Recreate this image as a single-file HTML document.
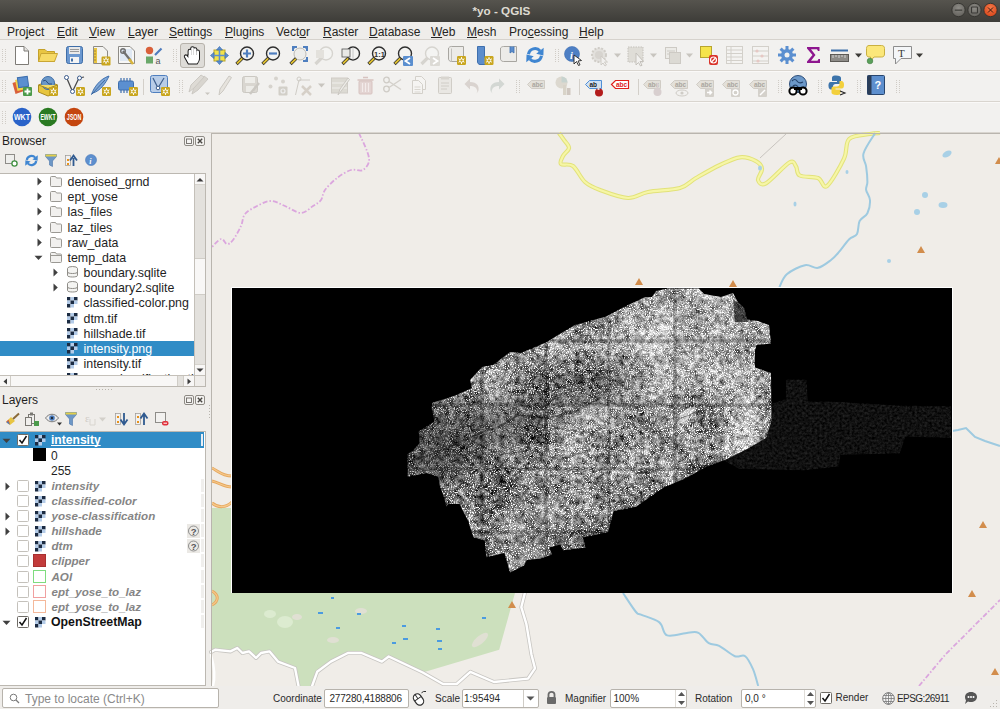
<!DOCTYPE html><html><head><meta charset="utf-8"><title>QGIS</title><style>
*{margin:0;padding:0;box-sizing:border-box}
html,body{width:1000px;height:709px;overflow:hidden;background:#f0efed;font-family:"Liberation Sans",sans-serif}
.a{position:absolute}
.t{position:absolute;white-space:nowrap;line-height:1}
svg{overflow:visible}
u{text-decoration-skip-ink:none;text-underline-offset:0.6px}
</style></head><body><div class="a" style="left:0;top:0;width:1000px;height:22px;background:linear-gradient(#56544e,#3d3c38)"></div><div class="t" style="left:472.5px;top:4.8px;font-size:11.7px;color:#dfdbd2;font-weight:bold;font-style:normal;">*yo - QGIS</div><svg style="position:absolute;left:950px;top:2px" width="50" height="18" viewBox="0 0 50 18" >
<defs><radialGradient id="wb" cx="50%" cy="35%" r="65%"><stop offset="0" stop-color="#8e8c87"/><stop offset="1" stop-color="#63615c"/></radialGradient>
<radialGradient id="wc" cx="50%" cy="35%" r="65%"><stop offset="0" stop-color="#f57a4a"/><stop offset="1" stop-color="#d9461a"/></radialGradient></defs>
<circle cx="8.5" cy="8" r="6.7" fill="url(#wb)" stroke="#363531" stroke-width="1"/>
<rect x="4.8" y="7.6" width="7.4" height="1.1" fill="#3a3936"/>
<circle cx="24.5" cy="8" r="6.7" fill="url(#wb)" stroke="#363531" stroke-width="1"/>
<rect x="21.5" y="5" width="6" height="6" rx="0.8" fill="none" stroke="#3a3936" stroke-width="1.1"/>
<circle cx="40.5" cy="8" r="6.7" fill="url(#wc)" stroke="#363531" stroke-width="1"/>
<path d="M38 5.5 L43 10.5 M43 5.5 L38 10.5" stroke="#3b1a10" stroke-width="1.0"/>
</svg><div class="a" style="left:0;top:22px;width:1000px;height:17px;background:#efedea"></div><div class="a" style="left:0;top:39px;width:1000px;height:1px;background:#d6d2cc"></div><div class="t" style="left:7px;top:26px;font-size:12px;color:#262523;font-weight:normal;font-style:normal;">Pro<u>j</u>ect</div><div class="t" style="left:57px;top:26px;font-size:12px;color:#262523;font-weight:normal;font-style:normal;"><u>E</u>dit</div><div class="t" style="left:89px;top:26px;font-size:12px;color:#262523;font-weight:normal;font-style:normal;"><u>V</u>iew</div><div class="t" style="left:128px;top:26px;font-size:12px;color:#262523;font-weight:normal;font-style:normal;"><u>L</u>ayer</div><div class="t" style="left:169px;top:26px;font-size:12px;color:#262523;font-weight:normal;font-style:normal;"><u>S</u>ettings</div><div class="t" style="left:225px;top:26px;font-size:12px;color:#262523;font-weight:normal;font-style:normal;"><u>P</u>lugins</div><div class="t" style="left:276px;top:26px;font-size:12px;color:#262523;font-weight:normal;font-style:normal;">Vect<u>o</u>r</div><div class="t" style="left:323px;top:26px;font-size:12px;color:#262523;font-weight:normal;font-style:normal;"><u>R</u>aster</div><div class="t" style="left:369px;top:26px;font-size:12px;color:#262523;font-weight:normal;font-style:normal;"><u>D</u>atabase</div><div class="t" style="left:431px;top:26px;font-size:12px;color:#262523;font-weight:normal;font-style:normal;"><u>W</u>eb</div><div class="t" style="left:467px;top:26px;font-size:12px;color:#262523;font-weight:normal;font-style:normal;"><u>M</u>esh</div><div class="t" style="left:509px;top:26px;font-size:12px;color:#262523;font-weight:normal;font-style:normal;">Pro<u>c</u>essing</div><div class="t" style="left:579px;top:26px;font-size:12px;color:#262523;font-weight:normal;font-style:normal;"><u>H</u>elp</div><div class="a" style="left:0;top:40px;width:1000px;height:93px;background:#f2f1ef"></div><div class="a" style="left:0;top:70px;width:1000px;height:1px;background:#d9d5cf"></div><div class="a" style="left:0;top:71px;width:1000px;height:1px;background:#faf9f8"></div><div class="a" style="left:0;top:101px;width:1000px;height:1px;background:#d9d5cf"></div><div class="a" style="left:0;top:102px;width:1000px;height:1px;background:#faf9f8"></div><div class="a" style="left:0;top:132px;width:1000px;height:1px;background:#d9d5cf"></div><div class="a" style="left:0;top:133px;width:1000px;height:1px;background:#faf9f8"></div><div style="position:absolute;left:2px;top:49px;width:1px;height:1px;background:#d0ccc6"></div><div style="position:absolute;left:5px;top:49px;width:1px;height:1px;background:#d0ccc6"></div><div style="position:absolute;left:2px;top:51px;width:1px;height:1px;background:#d0ccc6"></div><div style="position:absolute;left:5px;top:51px;width:1px;height:1px;background:#d0ccc6"></div><div style="position:absolute;left:2px;top:53px;width:1px;height:1px;background:#d0ccc6"></div><div style="position:absolute;left:5px;top:53px;width:1px;height:1px;background:#d0ccc6"></div><div style="position:absolute;left:2px;top:55px;width:1px;height:1px;background:#d0ccc6"></div><div style="position:absolute;left:5px;top:55px;width:1px;height:1px;background:#d0ccc6"></div><div style="position:absolute;left:2px;top:57px;width:1px;height:1px;background:#d0ccc6"></div><div style="position:absolute;left:5px;top:57px;width:1px;height:1px;background:#d0ccc6"></div><div style="position:absolute;left:2px;top:59px;width:1px;height:1px;background:#d0ccc6"></div><div style="position:absolute;left:5px;top:59px;width:1px;height:1px;background:#d0ccc6"></div><div style="position:absolute;left:2px;top:61px;width:1px;height:1px;background:#d0ccc6"></div><div style="position:absolute;left:5px;top:61px;width:1px;height:1px;background:#d0ccc6"></div><div style="position:absolute;left:173px;top:49px;width:1px;height:1px;background:#d0ccc6"></div><div style="position:absolute;left:176px;top:49px;width:1px;height:1px;background:#d0ccc6"></div><div style="position:absolute;left:173px;top:51px;width:1px;height:1px;background:#d0ccc6"></div><div style="position:absolute;left:176px;top:51px;width:1px;height:1px;background:#d0ccc6"></div><div style="position:absolute;left:173px;top:53px;width:1px;height:1px;background:#d0ccc6"></div><div style="position:absolute;left:176px;top:53px;width:1px;height:1px;background:#d0ccc6"></div><div style="position:absolute;left:173px;top:55px;width:1px;height:1px;background:#d0ccc6"></div><div style="position:absolute;left:176px;top:55px;width:1px;height:1px;background:#d0ccc6"></div><div style="position:absolute;left:173px;top:57px;width:1px;height:1px;background:#d0ccc6"></div><div style="position:absolute;left:176px;top:57px;width:1px;height:1px;background:#d0ccc6"></div><div style="position:absolute;left:173px;top:59px;width:1px;height:1px;background:#d0ccc6"></div><div style="position:absolute;left:176px;top:59px;width:1px;height:1px;background:#d0ccc6"></div><div style="position:absolute;left:173px;top:61px;width:1px;height:1px;background:#d0ccc6"></div><div style="position:absolute;left:176px;top:61px;width:1px;height:1px;background:#d0ccc6"></div><div style="position:absolute;left:555px;top:49px;width:1px;height:1px;background:#d0ccc6"></div><div style="position:absolute;left:558px;top:49px;width:1px;height:1px;background:#d0ccc6"></div><div style="position:absolute;left:555px;top:51px;width:1px;height:1px;background:#d0ccc6"></div><div style="position:absolute;left:558px;top:51px;width:1px;height:1px;background:#d0ccc6"></div><div style="position:absolute;left:555px;top:53px;width:1px;height:1px;background:#d0ccc6"></div><div style="position:absolute;left:558px;top:53px;width:1px;height:1px;background:#d0ccc6"></div><div style="position:absolute;left:555px;top:55px;width:1px;height:1px;background:#d0ccc6"></div><div style="position:absolute;left:558px;top:55px;width:1px;height:1px;background:#d0ccc6"></div><div style="position:absolute;left:555px;top:57px;width:1px;height:1px;background:#d0ccc6"></div><div style="position:absolute;left:558px;top:57px;width:1px;height:1px;background:#d0ccc6"></div><div style="position:absolute;left:555px;top:59px;width:1px;height:1px;background:#d0ccc6"></div><div style="position:absolute;left:558px;top:59px;width:1px;height:1px;background:#d0ccc6"></div><div style="position:absolute;left:555px;top:61px;width:1px;height:1px;background:#d0ccc6"></div><div style="position:absolute;left:558px;top:61px;width:1px;height:1px;background:#d0ccc6"></div><div style="position:absolute;left:2px;top:80px;width:1px;height:1px;background:#d0ccc6"></div><div style="position:absolute;left:5px;top:80px;width:1px;height:1px;background:#d0ccc6"></div><div style="position:absolute;left:2px;top:82px;width:1px;height:1px;background:#d0ccc6"></div><div style="position:absolute;left:5px;top:82px;width:1px;height:1px;background:#d0ccc6"></div><div style="position:absolute;left:2px;top:84px;width:1px;height:1px;background:#d0ccc6"></div><div style="position:absolute;left:5px;top:84px;width:1px;height:1px;background:#d0ccc6"></div><div style="position:absolute;left:2px;top:86px;width:1px;height:1px;background:#d0ccc6"></div><div style="position:absolute;left:5px;top:86px;width:1px;height:1px;background:#d0ccc6"></div><div style="position:absolute;left:2px;top:88px;width:1px;height:1px;background:#d0ccc6"></div><div style="position:absolute;left:5px;top:88px;width:1px;height:1px;background:#d0ccc6"></div><div style="position:absolute;left:2px;top:90px;width:1px;height:1px;background:#d0ccc6"></div><div style="position:absolute;left:5px;top:90px;width:1px;height:1px;background:#d0ccc6"></div><div style="position:absolute;left:2px;top:92px;width:1px;height:1px;background:#d0ccc6"></div><div style="position:absolute;left:5px;top:92px;width:1px;height:1px;background:#d0ccc6"></div><div style="position:absolute;left:179px;top:80px;width:1px;height:1px;background:#d0ccc6"></div><div style="position:absolute;left:182px;top:80px;width:1px;height:1px;background:#d0ccc6"></div><div style="position:absolute;left:179px;top:82px;width:1px;height:1px;background:#d0ccc6"></div><div style="position:absolute;left:182px;top:82px;width:1px;height:1px;background:#d0ccc6"></div><div style="position:absolute;left:179px;top:84px;width:1px;height:1px;background:#d0ccc6"></div><div style="position:absolute;left:182px;top:84px;width:1px;height:1px;background:#d0ccc6"></div><div style="position:absolute;left:179px;top:86px;width:1px;height:1px;background:#d0ccc6"></div><div style="position:absolute;left:182px;top:86px;width:1px;height:1px;background:#d0ccc6"></div><div style="position:absolute;left:179px;top:88px;width:1px;height:1px;background:#d0ccc6"></div><div style="position:absolute;left:182px;top:88px;width:1px;height:1px;background:#d0ccc6"></div><div style="position:absolute;left:179px;top:90px;width:1px;height:1px;background:#d0ccc6"></div><div style="position:absolute;left:182px;top:90px;width:1px;height:1px;background:#d0ccc6"></div><div style="position:absolute;left:179px;top:92px;width:1px;height:1px;background:#d0ccc6"></div><div style="position:absolute;left:182px;top:92px;width:1px;height:1px;background:#d0ccc6"></div><div style="position:absolute;left:516px;top:80px;width:1px;height:1px;background:#d0ccc6"></div><div style="position:absolute;left:519px;top:80px;width:1px;height:1px;background:#d0ccc6"></div><div style="position:absolute;left:516px;top:82px;width:1px;height:1px;background:#d0ccc6"></div><div style="position:absolute;left:519px;top:82px;width:1px;height:1px;background:#d0ccc6"></div><div style="position:absolute;left:516px;top:84px;width:1px;height:1px;background:#d0ccc6"></div><div style="position:absolute;left:519px;top:84px;width:1px;height:1px;background:#d0ccc6"></div><div style="position:absolute;left:516px;top:86px;width:1px;height:1px;background:#d0ccc6"></div><div style="position:absolute;left:519px;top:86px;width:1px;height:1px;background:#d0ccc6"></div><div style="position:absolute;left:516px;top:88px;width:1px;height:1px;background:#d0ccc6"></div><div style="position:absolute;left:519px;top:88px;width:1px;height:1px;background:#d0ccc6"></div><div style="position:absolute;left:516px;top:90px;width:1px;height:1px;background:#d0ccc6"></div><div style="position:absolute;left:519px;top:90px;width:1px;height:1px;background:#d0ccc6"></div><div style="position:absolute;left:516px;top:92px;width:1px;height:1px;background:#d0ccc6"></div><div style="position:absolute;left:519px;top:92px;width:1px;height:1px;background:#d0ccc6"></div><div style="position:absolute;left:778px;top:80px;width:1px;height:1px;background:#d0ccc6"></div><div style="position:absolute;left:781px;top:80px;width:1px;height:1px;background:#d0ccc6"></div><div style="position:absolute;left:778px;top:82px;width:1px;height:1px;background:#d0ccc6"></div><div style="position:absolute;left:781px;top:82px;width:1px;height:1px;background:#d0ccc6"></div><div style="position:absolute;left:778px;top:84px;width:1px;height:1px;background:#d0ccc6"></div><div style="position:absolute;left:781px;top:84px;width:1px;height:1px;background:#d0ccc6"></div><div style="position:absolute;left:778px;top:86px;width:1px;height:1px;background:#d0ccc6"></div><div style="position:absolute;left:781px;top:86px;width:1px;height:1px;background:#d0ccc6"></div><div style="position:absolute;left:778px;top:88px;width:1px;height:1px;background:#d0ccc6"></div><div style="position:absolute;left:781px;top:88px;width:1px;height:1px;background:#d0ccc6"></div><div style="position:absolute;left:778px;top:90px;width:1px;height:1px;background:#d0ccc6"></div><div style="position:absolute;left:781px;top:90px;width:1px;height:1px;background:#d0ccc6"></div><div style="position:absolute;left:778px;top:92px;width:1px;height:1px;background:#d0ccc6"></div><div style="position:absolute;left:781px;top:92px;width:1px;height:1px;background:#d0ccc6"></div><div style="position:absolute;left:818px;top:80px;width:1px;height:1px;background:#d0ccc6"></div><div style="position:absolute;left:821px;top:80px;width:1px;height:1px;background:#d0ccc6"></div><div style="position:absolute;left:818px;top:82px;width:1px;height:1px;background:#d0ccc6"></div><div style="position:absolute;left:821px;top:82px;width:1px;height:1px;background:#d0ccc6"></div><div style="position:absolute;left:818px;top:84px;width:1px;height:1px;background:#d0ccc6"></div><div style="position:absolute;left:821px;top:84px;width:1px;height:1px;background:#d0ccc6"></div><div style="position:absolute;left:818px;top:86px;width:1px;height:1px;background:#d0ccc6"></div><div style="position:absolute;left:821px;top:86px;width:1px;height:1px;background:#d0ccc6"></div><div style="position:absolute;left:818px;top:88px;width:1px;height:1px;background:#d0ccc6"></div><div style="position:absolute;left:821px;top:88px;width:1px;height:1px;background:#d0ccc6"></div><div style="position:absolute;left:818px;top:90px;width:1px;height:1px;background:#d0ccc6"></div><div style="position:absolute;left:821px;top:90px;width:1px;height:1px;background:#d0ccc6"></div><div style="position:absolute;left:818px;top:92px;width:1px;height:1px;background:#d0ccc6"></div><div style="position:absolute;left:821px;top:92px;width:1px;height:1px;background:#d0ccc6"></div><div style="position:absolute;left:857px;top:80px;width:1px;height:1px;background:#d0ccc6"></div><div style="position:absolute;left:860px;top:80px;width:1px;height:1px;background:#d0ccc6"></div><div style="position:absolute;left:857px;top:82px;width:1px;height:1px;background:#d0ccc6"></div><div style="position:absolute;left:860px;top:82px;width:1px;height:1px;background:#d0ccc6"></div><div style="position:absolute;left:857px;top:84px;width:1px;height:1px;background:#d0ccc6"></div><div style="position:absolute;left:860px;top:84px;width:1px;height:1px;background:#d0ccc6"></div><div style="position:absolute;left:857px;top:86px;width:1px;height:1px;background:#d0ccc6"></div><div style="position:absolute;left:860px;top:86px;width:1px;height:1px;background:#d0ccc6"></div><div style="position:absolute;left:857px;top:88px;width:1px;height:1px;background:#d0ccc6"></div><div style="position:absolute;left:860px;top:88px;width:1px;height:1px;background:#d0ccc6"></div><div style="position:absolute;left:857px;top:90px;width:1px;height:1px;background:#d0ccc6"></div><div style="position:absolute;left:860px;top:90px;width:1px;height:1px;background:#d0ccc6"></div><div style="position:absolute;left:857px;top:92px;width:1px;height:1px;background:#d0ccc6"></div><div style="position:absolute;left:860px;top:92px;width:1px;height:1px;background:#d0ccc6"></div><div style="position:absolute;left:896px;top:80px;width:1px;height:1px;background:#d0ccc6"></div><div style="position:absolute;left:899px;top:80px;width:1px;height:1px;background:#d0ccc6"></div><div style="position:absolute;left:896px;top:82px;width:1px;height:1px;background:#d0ccc6"></div><div style="position:absolute;left:899px;top:82px;width:1px;height:1px;background:#d0ccc6"></div><div style="position:absolute;left:896px;top:84px;width:1px;height:1px;background:#d0ccc6"></div><div style="position:absolute;left:899px;top:84px;width:1px;height:1px;background:#d0ccc6"></div><div style="position:absolute;left:896px;top:86px;width:1px;height:1px;background:#d0ccc6"></div><div style="position:absolute;left:899px;top:86px;width:1px;height:1px;background:#d0ccc6"></div><div style="position:absolute;left:896px;top:88px;width:1px;height:1px;background:#d0ccc6"></div><div style="position:absolute;left:899px;top:88px;width:1px;height:1px;background:#d0ccc6"></div><div style="position:absolute;left:896px;top:90px;width:1px;height:1px;background:#d0ccc6"></div><div style="position:absolute;left:899px;top:90px;width:1px;height:1px;background:#d0ccc6"></div><div style="position:absolute;left:896px;top:92px;width:1px;height:1px;background:#d0ccc6"></div><div style="position:absolute;left:899px;top:92px;width:1px;height:1px;background:#d0ccc6"></div><div style="position:absolute;left:2px;top:111px;width:1px;height:1px;background:#d0ccc6"></div><div style="position:absolute;left:5px;top:111px;width:1px;height:1px;background:#d0ccc6"></div><div style="position:absolute;left:2px;top:113px;width:1px;height:1px;background:#d0ccc6"></div><div style="position:absolute;left:5px;top:113px;width:1px;height:1px;background:#d0ccc6"></div><div style="position:absolute;left:2px;top:115px;width:1px;height:1px;background:#d0ccc6"></div><div style="position:absolute;left:5px;top:115px;width:1px;height:1px;background:#d0ccc6"></div><div style="position:absolute;left:2px;top:117px;width:1px;height:1px;background:#d0ccc6"></div><div style="position:absolute;left:5px;top:117px;width:1px;height:1px;background:#d0ccc6"></div><div style="position:absolute;left:2px;top:119px;width:1px;height:1px;background:#d0ccc6"></div><div style="position:absolute;left:5px;top:119px;width:1px;height:1px;background:#d0ccc6"></div><div style="position:absolute;left:2px;top:121px;width:1px;height:1px;background:#d0ccc6"></div><div style="position:absolute;left:5px;top:121px;width:1px;height:1px;background:#d0ccc6"></div><div style="position:absolute;left:2px;top:123px;width:1px;height:1px;background:#d0ccc6"></div><div style="position:absolute;left:5px;top:123px;width:1px;height:1px;background:#d0ccc6"></div><svg style="position:absolute;left:14px;top:46px" width="16" height="19" viewBox="0 0 16 19" ><path d="M1.5 0.5 H10 L14.5 5 V18.5 H1.5 Z" fill="#fff" stroke="#7d7b76"/><path d="M10 0.5 V5 H14.5" fill="#e6e4e0" stroke="#7d7b76"/></svg><svg style="position:absolute;left:38px;top:47px" width="20" height="16" viewBox="0 0 20 16" ><path d="M0.5 2.5 H7 L9 4.5 H16.5 V14.5 H0.5 Z" fill="#e8c542" stroke="#c4a12a"/><path d="M0.5 14.5 L3 6.5 H19.5 L16.5 14.5 Z" fill="#f6da66" stroke="#c9a633"/></svg><svg style="position:absolute;left:66px;top:46px" width="17" height="18" viewBox="0 0 17 18" ><rect x="0.5" y="0.5" width="16" height="17" rx="2" fill="#6b98d0" stroke="#3f6ea8"/><rect x="3" y="1" width="11" height="7" fill="#e9e9e9"/><path d="M4 3.5H13M4 5.5H13" stroke="#9a9a9a"/><rect x="4" y="11" width="9" height="6" fill="#f4f4f4"/><rect x="5" y="12.5" width="2" height="3" fill="#3f6ea8"/></svg><svg style="position:absolute;left:92px;top:46px" width="19" height="19" viewBox="0 0 19 19" ><path d="M1.5 0.5 H11 L15.5 5 V17.5 H1.5 Z" fill="#f3f3f1" stroke="#8d8b86"/><rect x="2" y="2" width="3" height="15" fill="#e8c542"/><path d="M2 5H4M2 8H4M2 11H4M2 14H4" stroke="#a8862a"/><rect x="9.5" y="10.5" width="9" height="9" rx="1.2" fill="#c9a61f"/><path d="M14.0 14.5 L16.9 16.2 M14.0 14.5 L14.0 17.9 M14.0 14.5 L11.1 16.2 M14.0 14.5 L11.1 12.8 M14.0 14.5 L14.0 11.1 M14.0 14.5 L16.9 12.8 " stroke="#fff" stroke-width="1"/><circle cx="14.0" cy="14.5" r="1.7" fill="#c9a61f" stroke="#fff" stroke-width="0.9"/></svg><svg style="position:absolute;left:117px;top:46px" width="20" height="19" viewBox="0 0 20 19" ><path d="M1.5 0.5 H13 L17.5 5 V17.5 H1.5 Z" fill="#f7f7f6" stroke="#8d8b86"/><rect x="3" y="3" width="12" height="12" fill="#dfe8f3"/><path d="M6 5 L14 15" stroke="#6f6f6f" stroke-width="2.2"/><circle cx="6" cy="5" r="2.3" fill="none" stroke="#6f6f6f" stroke-width="1.4"/><path d="M12 13 L16 18" stroke="#d7b33a" stroke-width="2.6"/></svg><svg style="position:absolute;left:145px;top:46px" width="18" height="19" viewBox="0 0 18 19" ><circle cx="4.5" cy="4.5" r="3.7" fill="#d9603a"/><path d="M10 9 L16.5 2.5" stroke="#4e7bbd" stroke-width="2.2"/><rect x="1" y="10.5" width="7" height="7" fill="#6aa86a"/><text x="10.5" y="17.5" font-size="9" font-family="Liberation Sans" fill="#555">a</text></svg><div class="a" style="left:180px;top:43px;width:25px;height:25px;background:#dedcd8;border:1px solid #b6b2ab;border-radius:3px"></div><svg style="position:absolute;left:184px;top:46px" width="18" height="19" viewBox="0 0 18 19" ><g stroke="#1a1a1a" stroke-width="2" fill="#1a1a1a"><g ><rect x="4.6" y="3.8" width="2.6" height="10" rx="1.3"/><rect x="7.2" y="1.2" width="2.6" height="10" rx="1.3"/><rect x="9.8" y="2.2" width="2.6" height="10" rx="1.3"/><rect x="12.4" y="4.6" width="2.6" height="9" rx="1.3"/><path d="M4.6 10 L4.6 12.2 L2.6 9.8 C1.6 8.8 0.4 9.8 1 11 L4.6 17.6 H12.8 C14.2 16 15 14.6 15 12 V9 H4.6Z"/></g></g><g fill="#fff"><g ><rect x="4.6" y="3.8" width="2.6" height="10" rx="1.3"/><rect x="7.2" y="1.2" width="2.6" height="10" rx="1.3"/><rect x="9.8" y="2.2" width="2.6" height="10" rx="1.3"/><rect x="12.4" y="4.6" width="2.6" height="9" rx="1.3"/><path d="M4.6 10 L4.6 12.2 L2.6 9.8 C1.6 8.8 0.4 9.8 1 11 L4.6 17.6 H12.8 C14.2 16 15 14.6 15 12 V9 H4.6Z"/></g></g></svg><svg style="position:absolute;left:210px;top:46px" width="19" height="19" viewBox="0 0 19 19" ><rect x="4" y="4" width="11" height="11" fill="#f2e24a" stroke="#b8a52e"/><path d="M9.5 0.5 L12.5 4 H6.5 Z M9.5 18.5 L12.5 15 H6.5 Z M0.5 9.5 L4 6.5 V12.5 Z M18.5 9.5 L15 6.5 V12.5 Z" fill="#5c8fd0" stroke="#3e6fae" stroke-width="0.7"/><path d="M9.5 4V15M4 9.5H15" stroke="#5c8fd0" stroke-width="1.6"/></svg><svg style="position:absolute;left:235px;top:46px" width="20" height="20" viewBox="0 0 20 20" ><circle cx="12" cy="7.5" r="6.5" fill="#f4f4f2" stroke="#2f2f2f" stroke-width="1.4"/><path d="M7.5 12 L1.5 18" stroke="#2f2f2f" stroke-width="3.2"/><path d="M7.2 12.3 L2 17.5" stroke="#e0c030" stroke-width="1.8"/><path d="M12 3.5V11.5M8 7.5H16" stroke="#4f7fbf" stroke-width="2.2"/></svg><svg style="position:absolute;left:261px;top:46px" width="20" height="20" viewBox="0 0 20 20" ><circle cx="12" cy="7.5" r="6.5" fill="#f4f4f2" stroke="#2f2f2f" stroke-width="1.4"/><path d="M7.5 12 L1.5 18" stroke="#2f2f2f" stroke-width="3.2"/><path d="M7.2 12.3 L2 17.5" stroke="#e0c030" stroke-width="1.8"/><path d="M8 7.5H16" stroke="#4f7fbf" stroke-width="2.2"/></svg><svg style="position:absolute;left:289px;top:45px" width="20" height="20" viewBox="0 0 20 20" ><circle cx="11" cy="9" r="6" fill="#ededeb" stroke="#bdbbb6" stroke-width="1"/><path d="M7 13.5 L1.5 19" stroke="#2f2f2f" stroke-width="3.2"/><path d="M6.8 13.8 L2 18.5" stroke="#e0c030" stroke-width="1.8"/><path d="M3 1H8L3 6Z M19 1H14L19 6Z M19 17H14L19 12Z" fill="#4f7fbf"/><path d="M3 1H8V3H5V6H3Z M19 1V6H17V3H14V1Z M19 17V12H17V15H14V17Z" fill="#4f7fbf"/></svg><svg style="position:absolute;left:314px;top:46px" width="20" height="20" viewBox="0 0 20 20" ><circle cx="12" cy="7.5" r="6.5" fill="#f4f4f2" stroke="#d6d4cf" stroke-width="1.4"/><path d="M7.5 12 L1.5 18" stroke="#d6d4cf" stroke-width="3.2"/><path d="M7.2 12.3 L2 17.5" stroke="#d6d4cf" stroke-width="1.8"/><rect x="2" y="4" width="8" height="8" fill="#e3e1dc"/></svg><svg style="position:absolute;left:341px;top:46px" width="20" height="20" viewBox="0 0 20 20" ><circle cx="12" cy="7.5" r="6.5" fill="#f4f4f2" stroke="#2f2f2f" stroke-width="1.4"/><path d="M7.5 12 L1.5 18" stroke="#2f2f2f" stroke-width="3.2"/><path d="M7.2 12.3 L2 17.5" stroke="#e0c030" stroke-width="1.8"/><rect x="1" y="3" width="8" height="8" fill="#e9e9e7" stroke="#555" stroke-width="0.8"/><path d="M12 1.5V13.5" stroke="#c8c8c8"/></svg><svg style="position:absolute;left:367px;top:46px" width="20" height="20" viewBox="0 0 20 20" ><circle cx="12" cy="7.5" r="6.5" fill="#f4f4f2" stroke="#2f2f2f" stroke-width="1.4"/><path d="M7.5 12 L1.5 18" stroke="#2f2f2f" stroke-width="3.2"/><path d="M7.2 12.3 L2 17.5" stroke="#e0c030" stroke-width="1.8"/><text x="7" y="10.5" font-size="7.5" font-weight="bold" font-family="Liberation Sans" fill="#333">1:1</text></svg><svg style="position:absolute;left:393px;top:46px" width="20" height="20" viewBox="0 0 20 20" ><circle cx="12" cy="7.5" r="6.5" fill="#f4f4f2" stroke="#2f2f2f" stroke-width="1.4"/><path d="M7.5 12 L1.5 18" stroke="#2f2f2f" stroke-width="3.2"/><path d="M7.2 12.3 L2 17.5" stroke="#e0c030" stroke-width="1.8"/><rect x="10" y="10" width="10" height="10" rx="1" fill="#5b8fcf"/><path d="M17 12 L12.5 15 L17 18" fill="none" stroke="#fff" stroke-width="1.8"/></svg><svg style="position:absolute;left:420px;top:46px" width="20" height="20" viewBox="0 0 20 20" ><circle cx="12" cy="7.5" r="6.5" fill="#f4f4f2" stroke="#d6d4cf" stroke-width="1.4"/><path d="M7.5 12 L1.5 18" stroke="#d6d4cf" stroke-width="3.2"/><path d="M7.2 12.3 L2 17.5" stroke="#d6d4cf" stroke-width="1.8"/><rect x="10" y="10" width="10" height="10" rx="1" fill="#dcdad5"/><path d="M13 12 L17.5 15 L13 18" fill="none" stroke="#fff" stroke-width="1.8"/></svg><svg style="position:absolute;left:448px;top:46px" width="18" height="19" viewBox="0 0 18 19" ><path d="M0.5 2 C2 0 4 0.5 4 0.5 H15.5 V15.5 H3.5 C1.5 15.5 0.5 14 0.5 13 Z" fill="#ecebe8" stroke="#a8a6a1"/><path d="M3.5 2.5V15" stroke="#c3c1bc"/><rect x="9" y="10" width="9" height="9" rx="1.2" fill="#c9a61f"/><path d="M13.5 14.5 L16.4 16.2 M13.5 14.5 L13.5 17.9 M13.5 14.5 L10.6 16.2 M13.5 14.5 L10.6 12.8 M13.5 14.5 L13.5 11.1 M13.5 14.5 L16.4 12.8 " stroke="#fff" stroke-width="1"/><circle cx="13.5" cy="14.5" r="1.7" fill="#c9a61f" stroke="#fff" stroke-width="0.9"/></svg><svg style="position:absolute;left:477px;top:46px" width="17" height="19" viewBox="0 0 17 19" ><path d="M0.5 0.5 H7.5 V12 L11 15 V18.5 H3 C1.5 18.5 0.5 17 0.5 16 Z" fill="#5c8dcc" stroke="#3e6fae"/><rect x="7.5" y="10" width="9" height="9" rx="1.2" fill="#c9a61f"/><path d="M12.0 14.5 L14.9 16.2 M12.0 14.5 L12.0 17.9 M12.0 14.5 L9.1 16.2 M12.0 14.5 L9.1 12.8 M12.0 14.5 L12.0 11.1 M12.0 14.5 L14.9 12.8 " stroke="#fff" stroke-width="1"/><circle cx="12.0" cy="14.5" r="1.7" fill="#c9a61f" stroke="#fff" stroke-width="0.9"/></svg><svg style="position:absolute;left:500px;top:46px" width="17" height="18" viewBox="0 0 17 18" ><path d="M0.5 2 C2 0.5 3 0.5 3.5 0.5 H16.5 V15.5 H3.5 C1.5 15.5 0.5 14 0.5 13 Z" fill="#ecebe8" stroke="#a8a6a1"/><path d="M10 0.5 V7 L12 5.5 L14 7 V0.5" fill="#5c8dcc" stroke="#3e6fae" stroke-width="0.8"/></svg><svg style="position:absolute;left:526px;top:46px" width="18" height="18" viewBox="0 0 18 18" ><g transform="scale(1.38)"><g fill="none" stroke="#3f86d1" stroke-width="2.2"><path d="M1.8 6 A4.8 4.8 0 0 1 10.2 3.6"/><path d="M11.2 7 A4.8 4.8 0 0 1 2.8 9.4"/></g><path d="M12.8 1.2 L12.6 6.8 L7.4 5.6 Z M0.2 11.8 L0.4 6.2 L5.6 7.4 Z" fill="#3f86d1"/></g></svg><svg style="position:absolute;left:564px;top:46px" width="20" height="20" viewBox="0 0 20 20" ><circle cx="8" cy="8" r="7.5" fill="#4d7fc4" stroke="#3c6db0" stroke-width="0.6"/><text x="6" y="12.5" font-size="10" font-style="italic" font-weight="bold" font-family="Liberation Serif" fill="#fff">i</text><path d="M10 9 L10 18 L12.5 15.5 L14.5 19.5 L16 18.8 L14 15 L17.5 14.5 Z" fill="#fff" stroke="#222" stroke-width="0.9"/></svg><svg style="position:absolute;left:590px;top:46px" width="32" height="20" viewBox="0 0 32 20" ><circle cx="9" cy="9" r="7" fill="#e2e0dc" stroke="#cfccc6" stroke-width="2" stroke-dasharray="2 1.5"/><circle cx="9" cy="9" r="4" fill="#d7d4cf"/><path d="M11 10 L11 19 L13 17 L15 20 L16.5 19 L14.5 16 L17.5 16 Z" fill="#f2f1ef" stroke="#cfccc6"/><path d="M24 7.5 H31 L27.5 11.5Z" fill="#c8c5bf"/></svg><svg style="position:absolute;left:627px;top:46px" width="31" height="20" viewBox="0 0 31 20" ><rect x="1" y="1" width="15" height="15" fill="#dfddd7" stroke="#c4c1bb" stroke-dasharray="1.5 1"/><path d="M9 7 L9 19 L11.5 16.5 L13.5 20 L15 19.3 L13 15.5 L16.5 15.5 Z" fill="#f2f1ef" stroke="#c4c1bb"/><path d="M23 7.5 H30 L26.5 11.5Z" fill="#c8c5bf"/></svg><svg style="position:absolute;left:665px;top:46px" width="28" height="20" viewBox="0 0 28 20" ><rect x="0.5" y="1.5" width="11" height="11" fill="#ecebe7" stroke="#cdcac4"/><path d="M2 5H10M2 8H10" stroke="#cdcac4"/><rect x="4.5" y="6.5" width="11" height="11" fill="#dcdad4" stroke="#cdcac4"/><path d="M21 7.5 H28 L24.5 11.5Z" fill="#c8c5bf"/></svg><svg style="position:absolute;left:700px;top:46px" width="18" height="20" viewBox="0 0 18 20" ><rect x="0.5" y="0.5" width="11" height="11" fill="#f5e44a" stroke="#b8a52e"/><rect x="9" y="9" width="9" height="10" rx="2" fill="#d9332a"/><circle cx="13.5" cy="14" r="3" fill="none" stroke="#fff" stroke-width="1.2"/><path d="M11.5 16 L15.5 12" stroke="#fff" stroke-width="1.2"/></svg><svg style="position:absolute;left:726px;top:46px" width="17" height="18" viewBox="0 0 17 18" ><rect x="0.5" y="0.5" width="16" height="17" fill="#f4f3f1" stroke="#d3d0ca"/><path d="M1 4H16M1 7.5H16M1 11H16M1 14.5H16M5 1V17" stroke="#d3d0ca"/></svg><svg style="position:absolute;left:752px;top:46px" width="17" height="18" viewBox="0 0 17 18" ><rect x="0.5" y="0.5" width="16" height="17" fill="#f4f3f1" stroke="#d3d0ca"/><path d="M1 5H16M1 10H16M1 15H16" stroke="#d3d0ca"/><circle cx="5" cy="5" r="1.6" fill="#e6c8c4"/><circle cx="10" cy="10" r="1.6" fill="#e6c8c4"/><circle cx="6" cy="15" r="1.6" fill="#e6c8c4"/></svg><svg style="position:absolute;left:778px;top:46px" width="18" height="18" viewBox="0 0 18 18" ><rect x="7.5" y="0" width="3" height="5" fill="#5b8fd0" transform="rotate(0 9 9)"/><rect x="7.5" y="0" width="3" height="5" fill="#5b8fd0" transform="rotate(45 9 9)"/><rect x="7.5" y="0" width="3" height="5" fill="#5b8fd0" transform="rotate(90 9 9)"/><rect x="7.5" y="0" width="3" height="5" fill="#5b8fd0" transform="rotate(135 9 9)"/><rect x="7.5" y="0" width="3" height="5" fill="#5b8fd0" transform="rotate(180 9 9)"/><rect x="7.5" y="0" width="3" height="5" fill="#5b8fd0" transform="rotate(225 9 9)"/><rect x="7.5" y="0" width="3" height="5" fill="#5b8fd0" transform="rotate(270 9 9)"/><rect x="7.5" y="0" width="3" height="5" fill="#5b8fd0" transform="rotate(315 9 9)"/><circle cx="9" cy="9" r="6" fill="#5b8fd0"/><circle cx="9" cy="9" r="2.5" fill="#f2f1ef"/></svg><svg style="position:absolute;left:806px;top:46px" width="15" height="18" viewBox="0 0 15 18" ><path d="M1 1 H13.5 V5 H12 L11 3.2 H5 L9.5 9 L5 14.8 H11.5 L12.5 13 H14 V17 H1 V15.5 L6.5 9 L1 2.5 Z" fill="#8e168f"/></svg><svg style="position:absolute;left:830px;top:46px" width="32" height="18" viewBox="0 0 32 18" ><path d="M1 4.5H18" stroke="#3d6ea8" stroke-width="2"/><rect x="0.5" y="8.5" width="18" height="7" fill="#8e8c88" stroke="#5c5a56"/><path d="M3 9V12M6 9V11M9 9V12M12 9V11M15 9V12" stroke="#e8e8e8" stroke-width="0.8"/><path d="M25 7.5 H32 L28.5 11.5Z" fill="#3c3b37"/></svg><svg style="position:absolute;left:866px;top:45px" width="19" height="21" viewBox="0 0 19 21" ><path d="M3 0.5 H15.5 C17.5 0.5 18.5 1.5 18.5 3.5 V9 C18.5 11 17.5 12 15.5 12 H8 L4.5 16 V12 H3 C1.5 12 0.5 11 0.5 9 V3.5 C0.5 1.5 1.5 0.5 3 0.5Z" fill="#fbe77a" stroke="#c9b040"/><circle cx="4" cy="16" r="2.8" fill="#5aa05a" stroke="#3e7a3e" stroke-width="0.6"/></svg><svg style="position:absolute;left:893px;top:46px" width="31" height="20" viewBox="0 0 31 20" ><path d="M0.5 0.5 H18.5 V12.5 H8 L2.5 18 V12.5 H0.5 Z" fill="#f4f6f8" stroke="#8d8d8d"/><text x="5" y="11" font-size="11" font-family="Liberation Serif" fill="#333">T</text><path d="M23 7.5 H30 L26.5 11.5Z" fill="#3c3b37"/></svg><svg style="position:absolute;left:12px;top:76px" width="20" height="20" viewBox="0 0 20 20" ><path d="M0.5 7 L9 4 L12 15 L3.5 18 Z" fill="#d9603a"/><path d="M3 4 L11 2 L13.5 13 L5.5 15 Z" fill="#f2d24a"/><rect x="6" y="1" width="10" height="10" fill="#5b8fd0" stroke="#3e6fae" transform="rotate(-8 11 6)"/><rect x="11" y="11" width="9" height="9" rx="1" fill="#4b9a4b"/><path d="M15.5 12.5V18.5M12.5 15.5H18.5" stroke="#fff" stroke-width="1.8"/></svg><svg style="position:absolute;left:38px;top:76px" width="21" height="20" viewBox="0 0 21 20" ><path d="M0.5 9 L10 5 L19.5 9 V17 L10 20 L0.5 16 Z" fill="#e7c53e" stroke="#a88a20"/><circle cx="10" cy="7" r="6.5" fill="#6b98c9" stroke="#3f6ea8"/><path d="M5 5 Q8 3 9 6 T14 8" stroke="#2c4f80" fill="none"/><path d="M0.5 9 L10 12.5 L19.5 9" fill="#f2dc6e" stroke="#a88a20"/><rect x="11" y="11" width="9" height="9" rx="1.2" fill="#c9a61f"/><path d="M15.5 15.5 L18.4 17.2 M15.5 15.5 L15.5 18.9 M15.5 15.5 L12.6 17.2 M15.5 15.5 L12.6 13.8 M15.5 15.5 L15.5 12.1 M15.5 15.5 L18.4 13.8 " stroke="#fff" stroke-width="1"/><circle cx="15.5" cy="15.5" r="1.7" fill="#c9a61f" stroke="#fff" stroke-width="0.9"/></svg><svg style="position:absolute;left:64px;top:75px" width="21" height="21" viewBox="0 0 21 21" ><path d="M2.5 2.5 L8.5 16.5 L15 3" stroke="#4a4a4a" stroke-width="1.3" fill="none"/><path d="M15 3 L20 2" stroke="#4a4a4a" stroke-width="1.1"/><circle cx="2.5" cy="2.5" r="2" fill="#fff" stroke="#3a5a8a"/><circle cx="8.5" cy="16.5" r="2" fill="#fff" stroke="#3a5a8a"/><circle cx="15.5" cy="3" r="2" fill="#fff" stroke="#3a5a8a"/><rect x="12" y="12" width="9" height="9" rx="1.2" fill="#c9a61f"/><path d="M16.5 16.5 L19.4 18.2 M16.5 16.5 L16.5 19.9 M16.5 16.5 L13.6 18.2 M16.5 16.5 L13.6 14.8 M16.5 16.5 L16.5 13.1 M16.5 16.5 L19.4 14.8 " stroke="#fff" stroke-width="1"/><circle cx="16.5" cy="16.5" r="1.7" fill="#c9a61f" stroke="#fff" stroke-width="0.9"/></svg><svg style="position:absolute;left:90px;top:75px" width="21" height="21" viewBox="0 0 21 21" ><path d="M1.5 19.5 C4 12 10 4 19 1 C16 8 10 16 3 18 Z" fill="#7ea6d6" stroke="#3e6fae"/><path d="M2 19 L15 5" stroke="#2f5a90" stroke-width="0.8"/><rect x="12" y="12" width="9" height="9" rx="1.2" fill="#c9a61f"/><path d="M16.5 16.5 L19.4 18.2 M16.5 16.5 L16.5 19.9 M16.5 16.5 L13.6 18.2 M16.5 16.5 L13.6 14.8 M16.5 16.5 L16.5 13.1 M16.5 16.5 L19.4 14.8 " stroke="#fff" stroke-width="1"/><circle cx="16.5" cy="16.5" r="1.7" fill="#c9a61f" stroke="#fff" stroke-width="0.9"/></svg><svg style="position:absolute;left:118px;top:76px" width="20" height="20" viewBox="0 0 20 20" ><rect x="0.5" y="5" width="15" height="9" rx="1.5" fill="#5b8fd0" stroke="#3e6fae"/><path d="M3 2V5M6 2V5M9 2V5M12 2V5M3 14V17M6 14V17M9 14V17M12 14V17" stroke="#3e6fae" stroke-width="1.2"/><rect x="11" y="11" width="9" height="9" rx="1.2" fill="#c9a61f"/><path d="M15.5 15.5 L18.4 17.2 M15.5 15.5 L15.5 18.9 M15.5 15.5 L12.6 17.2 M15.5 15.5 L12.6 13.8 M15.5 15.5 L15.5 12.1 M15.5 15.5 L18.4 13.8 " stroke="#fff" stroke-width="1"/><circle cx="15.5" cy="15.5" r="1.7" fill="#c9a61f" stroke="#fff" stroke-width="0.9"/></svg><div class="a" style="left:143px;top:79px;width:1px;height:16px;background:#d3cfc9"></div><svg style="position:absolute;left:150px;top:75px" width="20" height="21" viewBox="0 0 20 21" ><rect x="0.5" y="0.5" width="17" height="17" rx="2" fill="#b8cde8" stroke="#4f7fbf"/><path d="M3 3 L8 13 L14 3" stroke="#3e5f8e" stroke-width="1.2" fill="none"/><circle cx="8" cy="13" r="1.8" fill="#fff" stroke="#3e5f8e"/><rect x="11" y="12" width="9" height="9" rx="1.2" fill="#c9a61f"/><path d="M15.5 16.5 L18.4 18.2 M15.5 16.5 L15.5 19.9 M15.5 16.5 L12.6 18.2 M15.5 16.5 L12.6 14.8 M15.5 16.5 L15.5 13.1 M15.5 16.5 L18.4 14.8 " stroke="#fff" stroke-width="1"/><circle cx="15.5" cy="16.5" r="1.7" fill="#c9a61f" stroke="#fff" stroke-width="0.9"/></svg><svg style="position:absolute;left:190px;top:75px" width="20" height="21" viewBox="0 0 20 21" ><path d="M2 19 L4 12 L14 1 L18 4 L8 15 Z" fill="#d8d5cf" stroke="#ccc9c3"/><path d="M-1 17 L1 10 L11 0 L14 2 L4 13 Z" fill="#dedbd5" stroke="#ccc9c3"/><path d="M15 17.5H20L17.5 20Z" fill="#c8c5bf"/></svg><svg style="position:absolute;left:218px;top:75px" width="14" height="21" viewBox="0 0 14 21" ><path d="M1 20 L2 14 L11 1 L13.5 2.5 L5 16 Z" fill="#e6e3dd" stroke="#ccc9c3"/></svg><svg style="position:absolute;left:242px;top:76px" width="18" height="19" viewBox="0 0 18 19" ><rect x="0.5" y="0.5" width="15" height="16" rx="2" fill="#d9d6d0" stroke="#cbc8c2"/><rect x="3" y="1" width="10" height="6" fill="#eeede9"/><rect x="4" y="10" width="8" height="6" fill="#ecebe7"/><path d="M8 18 L17 7" stroke="#cbc8c2" stroke-width="2.5"/></svg><svg style="position:absolute;left:268px;top:76px" width="20" height="20" viewBox="0 0 20 20" ><circle cx="8" cy="2.5" r="2" fill="#d6d3cd"/><circle cx="15" cy="5.5" r="2" fill="#d6d3cd"/><circle cx="2.5" cy="10.5" r="2" fill="#d6d3cd"/><rect x="10.5" y="10.5" width="9" height="9" rx="1" fill="#d2cfc8"/><circle cx="15" cy="15" r="2" fill="none" stroke="#eee" stroke-width="1.2"/></svg><svg style="position:absolute;left:295px;top:76px" width="30" height="20" viewBox="0 0 30 20" ><path d="M0.5 19 L4 4 M4 4 H15" stroke="#cfccc6"/><circle cx="4" cy="3" r="2" fill="none" stroke="#cfccc6"/><path d="M7 10 L16 19 M16 10 L7 19" stroke="#d6d0c8" stroke-width="2.5"/><path d="M23 7.5 H30 L26.5 11.5Z" fill="#c8c5bf"/></svg><svg style="position:absolute;left:331px;top:76px" width="18" height="19" viewBox="0 0 18 19" ><rect x="0.5" y="2" width="16" height="15" fill="#dcdad3" stroke="#cfccc6"/><path d="M1 7H16M1 12H16" stroke="#f0efec"/><path d="M7 19 L9 13 L17 2 L18.5 3.5 L11 14 Z" fill="#ecebe7" stroke="#cbc8c2"/></svg><svg style="position:absolute;left:357px;top:76px" width="17" height="19" viewBox="0 0 17 19" ><rect x="2" y="5" width="13" height="13" rx="1" fill="#e3d4d2" stroke="#d7c3c0"/><path d="M0.5 4H16.5M6 1.5H11" stroke="#d7c3c0" stroke-width="1.5"/><path d="M5.5 7V16M8.5 7V16M11.5 7V16" stroke="#f3ebea" stroke-width="1.2"/></svg><svg style="position:absolute;left:383px;top:76px" width="19" height="18" viewBox="0 0 19 18" ><circle cx="3.5" cy="4" r="2.8" fill="none" stroke="#cfccc6" stroke-width="1.3"/><circle cx="3.5" cy="13" r="2.8" fill="none" stroke="#cfccc6" stroke-width="1.3"/><path d="M6 5.5 L18 13.5 M6 11.5 L18 3.5" stroke="#d3d0ca" stroke-width="1.4"/></svg><svg style="position:absolute;left:412px;top:76px" width="14" height="18" viewBox="0 0 14 18" ><path d="M3.5 0.5H9.5L13.5 4.5V13.5H3.5Z" fill="#f5f4f2" stroke="#d3d0ca"/><path d="M0.5 4.5H6.5L10.5 8.5V17.5H0.5Z" fill="#f5f4f2" stroke="#d3d0ca"/><path d="M2.5 11H8.5M2.5 13.5H8.5M2.5 16H8.5" stroke="#d9d6d0"/></svg><svg style="position:absolute;left:438px;top:76px" width="14" height="18" viewBox="0 0 14 18" ><rect x="0.5" y="1.5" width="13" height="16" rx="1" fill="#e9e7e3" stroke="#d0cdc7"/><rect x="3" y="0.5" width="8" height="3" fill="#d8d5cf"/><path d="M3 7H11M3 10H11M3 13H9" stroke="#d0cdc7"/></svg><svg style="position:absolute;left:464px;top:78px" width="15" height="16" viewBox="0 0 15 16" ><path d="M6 0.5 L0.5 6 L6 11.5 V8 C10 8 12 9 13 12 C14 14 12.5 15.5 11 15.5 C15 15.5 15.5 10 13.5 7 C12 5 9.5 4 6 4 Z" fill="#d9d3cf"/></svg><svg style="position:absolute;left:490px;top:78px" width="15" height="16" viewBox="0 0 15 16" ><path d="M9 0.5 L14.5 6 L9 11.5 V8 C5 8 3 9 2 12 C1 14 2.5 15.5 4 15.5 C0 15.5 -0.5 10 1.5 7 C3 5 5.5 4 9 4 Z" fill="#d3d7d3"/></svg><svg style="position:absolute;left:527px;top:79px" width="18" height="12" viewBox="0 0 18 12" ><path d="M0.5 5.5 L4.5 1.5 H17.5 V9.5 H4.5 Z" fill="#e3e0d9" stroke="#d0ccc5"/><text x="5" y="8.3" font-size="6.5" font-weight="bold" font-family="Liberation Sans" fill="#aaa69f">abc</text></svg><svg style="position:absolute;left:555px;top:76px" width="17" height="20" viewBox="0 0 17 20" ><circle cx="6.5" cy="6.5" r="6" fill="#dcd8cf"/><path d="M6.5 6.5 L6.5 0.5 A6 6 0 0 1 12.5 6.5Z" fill="#c7d3cf"/><rect x="8" y="9" width="3.5" height="10" fill="#d8d3c8"/><rect x="12" y="12" width="3.5" height="7" fill="#cfc7c0"/></svg><div class="a" style="left:579px;top:79px;width:1px;height:16px;background:#d3cfc9"></div><svg style="position:absolute;left:585px;top:79px" width="20" height="18" viewBox="0 0 20 18" ><path d="M0.5 5.5 L4.5 1.5 H16.5 V9.5 H4.5 Z" fill="#cfe0f3" stroke="#4f8fd6"/><text x="4.5" y="8.3" font-size="6.5" font-weight="bold" font-family="Liberation Sans" fill="#222">ab</text><circle cx="14" cy="13.5" r="4" fill="#b31c1c"/><rect x="12.5" y="5" width="2" height="6" fill="#ddd"/></svg><svg style="position:absolute;left:611px;top:79px" width="18" height="12" viewBox="0 0 18 12" ><path d="M0.5 5.5 L4.5 1.5 H17.5 V9.5 H4.5 Z" fill="#fff" stroke="#e0201c" stroke-width="1.2"/><text x="5" y="8.3" font-size="6.5" font-weight="bold" font-family="Liberation Sans" fill="#e0201c">abc</text></svg><div class="a" style="left:638px;top:79px;width:1px;height:16px;background:#d3cfc9"></div><svg style="position:absolute;left:643px;top:79px" width="20" height="18" viewBox="0 0 20 18" ><path d="M0.5 5.5 L4.5 1.5 H17.5 V9.5 H4.5 Z" fill="#e3e0d9" stroke="#d0ccc5"/><text x="5" y="8.3" font-size="6.5" font-weight="bold" font-family="Liberation Sans" fill="#aaa69f">abc</text><circle cx="14.5" cy="13" r="4" fill="#d8cfcf"/><rect x="13.5" y="4" width="2" height="6" fill="#d8cfcf"/></svg><svg style="position:absolute;left:670px;top:79px" width="20" height="19" viewBox="0 0 20 19" ><path d="M0.5 5.5 L4.5 1.5 H17.5 V9.5 H4.5 Z" fill="#e3e0d9" stroke="#d0ccc5"/><text x="5" y="8.3" font-size="6.5" font-weight="bold" font-family="Liberation Sans" fill="#aaa69f">abc</text><ellipse cx="12" cy="14" rx="6" ry="3" fill="none" stroke="#cfccc6"/><circle cx="12" cy="14" r="1.6" fill="#cfccc6"/></svg><svg style="position:absolute;left:696px;top:79px" width="18" height="19" viewBox="0 0 18 19" ><path d="M0.5 5.5 L4.5 1.5 H17.5 V9.5 H4.5 Z" fill="#e3e0d9" stroke="#d0ccc5"/><text x="5" y="8.3" font-size="6.5" font-weight="bold" font-family="Liberation Sans" fill="#aaa69f">abc</text><rect x="9" y="9" width="9" height="9" rx="1" fill="#d4d1cb"/><path d="M11 13.5H15M13.5 11.5L15.5 13.5L13.5 15.5" stroke="#fff" stroke-width="1.5" fill="none"/></svg><svg style="position:absolute;left:722px;top:79px" width="18" height="19" viewBox="0 0 18 19" ><path d="M0.5 5.5 L4.5 1.5 H17.5 V9.5 H4.5 Z" fill="#e3e0d9" stroke="#d0ccc5"/><text x="5" y="8.3" font-size="6.5" font-weight="bold" font-family="Liberation Sans" fill="#aaa69f">abc</text><rect x="9" y="9" width="9" height="9" rx="1" fill="#d4d1cb"/><circle cx="13.5" cy="13.5" r="2.5" fill="none" stroke="#fff" stroke-width="1.3"/></svg><svg style="position:absolute;left:749px;top:79px" width="19" height="19" viewBox="0 0 19 19" ><path d="M0.5 5.5 L4.5 1.5 H17.5 V9.5 H4.5 Z" fill="#e3e0d9" stroke="#d0ccc5"/><text x="5" y="8.3" font-size="6.5" font-weight="bold" font-family="Liberation Sans" fill="#aaa69f">abc</text><rect x="9" y="9" width="9" height="9" rx="1" fill="#d4d1cb"/><path d="M11 16 L16 11" stroke="#fff" stroke-width="1.5"/></svg><svg style="position:absolute;left:788px;top:75px" width="20" height="21" viewBox="0 0 20 21" ><circle cx="10" cy="9" r="8.5" fill="#6b98c9" stroke="#2f4f7a"/><path d="M4 6 Q7 3 9 6 T15 7 M5 11 Q8 9 10 12 T16 12" stroke="#25446d" fill="none" stroke-width="1.2"/><circle cx="5" cy="16" r="3.6" fill="#fff" stroke="#000" stroke-width="2"/><circle cx="15" cy="16" r="3.6" fill="#fff" stroke="#000" stroke-width="2"/><path d="M6 12 H14 V15 H6Z" fill="#000"/></svg><svg style="position:absolute;left:828px;top:75px" width="19" height="21" viewBox="0 0 19 21" ><path d="M8 0.5 C4 0.5 4 2 4 4 V6 H9 V7 H2.5 C0.5 7 0.5 10 0.5 11 C0.5 13 1.5 14.5 3 14.5 H5 V11.5 C5 10 6 9 7.5 9 H11 C12.5 9 13 8 13 7 V3 C13 1.5 11.5 0.5 8 0.5Z" fill="#3c74ab"/><path d="M8.5 20 C12.5 20 12.5 18.5 12.5 16.5 V14.5 H7.5 V13.5 H14 C16 13.5 16 10.5 16 9.5 C16 7.5 15 6 13.5 6 H11.5 V9 C11.5 10.5 10.5 11.5 9 11.5 H5.5 C4 11.5 3.5 12.5 3.5 13.5 V17.5 C3.5 19 5 20 8.5 20Z" fill="#f3d03c"/><path d="M12 16 L17 18 L12 20" stroke="#222" fill="none" stroke-width="1.1"/></svg><svg style="position:absolute;left:867px;top:75px" width="18" height="20" viewBox="0 0 18 20" ><rect x="0.5" y="0.5" width="17" height="19" rx="1" fill="#5d8fce" stroke="#27456e"/><rect x="0.5" y="0.5" width="4" height="19" fill="#2a3d57"/><text x="7.5" y="14" font-size="11" font-weight="bold" font-family="Liberation Sans" fill="#fff">?</text></svg><svg style="position:absolute;left:11.5px;top:107px" width="20" height="20" viewBox="0 0 20 20" ><circle cx="10" cy="10" r="9.3" fill="#2a63c9"/><text x="10" y="13.4" text-anchor="middle" font-size="9.6" font-weight="bold" font-family="Liberation Sans" fill="#fff" transform="translate(10 0) scale(0.74 1) translate(-10 0)">WKT</text></svg><svg style="position:absolute;left:37.5px;top:107px" width="20" height="20" viewBox="0 0 20 20" ><circle cx="10" cy="10" r="9.3" fill="#2a7a22"/><text x="10" y="13.4" text-anchor="middle" font-size="8.6" font-weight="bold" font-family="Liberation Sans" fill="#fff" transform="translate(10 0) scale(0.6 1) translate(-10 0)">EWKT</text></svg><svg style="position:absolute;left:63.5px;top:107px" width="20" height="20" viewBox="0 0 20 20" ><circle cx="10" cy="10" r="9.3" fill="#c4460f"/><text x="10" y="13.4" text-anchor="middle" font-size="8.6" font-weight="bold" font-family="Liberation Sans" fill="#fff" transform="translate(10 0) scale(0.62 1) translate(-10 0)">JSON</text></svg><div class="a" style="left:0;top:133px;width:211px;height:553px;background:#efedea"></div><div class="t" style="left:2px;top:135px;font-size:12px;color:#1f1f1f;font-weight:normal;font-style:normal;">Browser</div><svg style="position:absolute;left:184px;top:136px" width="22" height="10" viewBox="0 0 22 10" ><rect x="0.5" y="0.5" width="9" height="9" rx="1.5" fill="#f4f3f1" stroke="#8e8b85"/><rect x="2.5" y="3" width="5" height="4.5" fill="none" stroke="#6e6b66" stroke-width="0.9"/><rect x="11.5" y="0.5" width="9" height="9" rx="1.5" fill="#f4f3f1" stroke="#8e8b85"/><path d="M13.8 2.8 L18.2 7.2 M18.2 2.8 L13.8 7.2" stroke="#4a4844" stroke-width="1.4"/></svg><svg style="position:absolute;left:5px;top:154px" width="13" height="13" viewBox="0 0 13 13" ><rect x="0.5" y="0.5" width="9" height="9" fill="#eeeeec" stroke="#8e8c88"/><circle cx="9.5" cy="9.5" r="2.6" fill="#fff" stroke="#3f8f3f" stroke-width="1.3"/></svg><svg style="position:absolute;left:25px;top:154px" width="13" height="13" viewBox="0 0 13 13" ><g fill="none" stroke="#3f86d1" stroke-width="2.2"><path d="M1.8 6 A4.8 4.8 0 0 1 10.2 3.6"/><path d="M11.2 7 A4.8 4.8 0 0 1 2.8 9.4"/></g><path d="M12.8 1.2 L12.6 6.8 L7.4 5.6 Z M0.2 11.8 L0.4 6.2 L5.6 7.4 Z" fill="#3f86d1"/></svg><svg style="position:absolute;left:45px;top:154px" width="13" height="13" viewBox="0 0 13 13" ><path d="M0.5 0.5 H11.5 V2.5 L7.5 7 V12.5 L4.5 11 V7 L0.5 2.5 Z" fill="#6d97c6" stroke="#4a74a8" stroke-width="0.6"/><rect x="0.5" y="0.5" width="11" height="2" fill="#e2cf4a"/></svg><svg style="position:absolute;left:65px;top:154px" width="13" height="13" viewBox="0 0 13 13" ><rect x="0.5" y="1.5" width="5" height="10" fill="#f2f1ef" stroke="#9a9893" stroke-width="0.7"/><rect x="2" y="5" width="2" height="2" fill="#e8921c"/><rect x="2" y="9" width="2" height="2" fill="#e8921c"/><path d="M8.5 12 V4 M5 6.5 L8.5 1.5 L12 6.5" stroke="#2f5a90" stroke-width="1.8" fill="none"/></svg><svg style="position:absolute;left:85px;top:154px" width="12" height="12" viewBox="0 0 12 12" ><circle cx="6" cy="6" r="5.5" fill="#5d8fce" stroke="#4a78b8" stroke-width="0.6"/><text x="4.3" y="9.5" font-size="8" font-style="italic" font-weight="bold" font-family="Liberation Serif" fill="#fff">i</text></svg><div class="a" style="left:0;top:173px;width:206px;height:214px;background:#fff;border:1px solid #bcb8b1;border-left:none"></div><div class="a" style="left:0px;top:174px;width:194px;height:201px;overflow:hidden"><svg style="position:absolute;left:37px;top:3px" width="6" height="9" viewBox="0 0 6 9" ><path d="M0.5 0.5 L4.8 4.5 L0.5 8.5 Z" fill="#404040"/></svg><svg style="position:absolute;left:50px;top:1px" width="12" height="12" viewBox="0 0 12 12" ><path d="M0.5 2.5 Q0.5 1.5 1.5 1.5 H5.5 L6.5 3 H10.5 Q11.5 3 11.5 4 V10.5 Q11.5 11.5 10.5 11.5 H1.5 Q0.5 11.5 0.5 10.5 Z" fill="#f1f0ee" stroke="#9a9893"/></svg><div class="t" style="left:67.5px;top:1.5px;font-size:12.4px;color:#1f1f1f;font-weight:normal;font-style:normal;">denoised_grnd</div><svg style="position:absolute;left:37px;top:18px" width="6" height="9" viewBox="0 0 6 9" ><path d="M0.5 0.5 L4.8 4.5 L0.5 8.5 Z" fill="#404040"/></svg><svg style="position:absolute;left:50px;top:16px" width="12" height="12" viewBox="0 0 12 12" ><path d="M0.5 2.5 Q0.5 1.5 1.5 1.5 H5.5 L6.5 3 H10.5 Q11.5 3 11.5 4 V10.5 Q11.5 11.5 10.5 11.5 H1.5 Q0.5 11.5 0.5 10.5 Z" fill="#f1f0ee" stroke="#9a9893"/></svg><div class="t" style="left:67.5px;top:16.5px;font-size:12.4px;color:#1f1f1f;font-weight:normal;font-style:normal;">ept_yose</div><svg style="position:absolute;left:37px;top:33px" width="6" height="9" viewBox="0 0 6 9" ><path d="M0.5 0.5 L4.8 4.5 L0.5 8.5 Z" fill="#404040"/></svg><svg style="position:absolute;left:50px;top:31px" width="12" height="12" viewBox="0 0 12 12" ><path d="M0.5 2.5 Q0.5 1.5 1.5 1.5 H5.5 L6.5 3 H10.5 Q11.5 3 11.5 4 V10.5 Q11.5 11.5 10.5 11.5 H1.5 Q0.5 11.5 0.5 10.5 Z" fill="#f1f0ee" stroke="#9a9893"/></svg><div class="t" style="left:67.5px;top:31.5px;font-size:12.4px;color:#1f1f1f;font-weight:normal;font-style:normal;">las_files</div><svg style="position:absolute;left:37px;top:49px" width="6" height="9" viewBox="0 0 6 9" ><path d="M0.5 0.5 L4.8 4.5 L0.5 8.5 Z" fill="#404040"/></svg><svg style="position:absolute;left:50px;top:47px" width="12" height="12" viewBox="0 0 12 12" ><path d="M0.5 2.5 Q0.5 1.5 1.5 1.5 H5.5 L6.5 3 H10.5 Q11.5 3 11.5 4 V10.5 Q11.5 11.5 10.5 11.5 H1.5 Q0.5 11.5 0.5 10.5 Z" fill="#f1f0ee" stroke="#9a9893"/></svg><div class="t" style="left:67.5px;top:47.5px;font-size:12.4px;color:#1f1f1f;font-weight:normal;font-style:normal;">laz_tiles</div><svg style="position:absolute;left:37px;top:64px" width="6" height="9" viewBox="0 0 6 9" ><path d="M0.5 0.5 L4.8 4.5 L0.5 8.5 Z" fill="#404040"/></svg><svg style="position:absolute;left:50px;top:62px" width="12" height="12" viewBox="0 0 12 12" ><path d="M0.5 2.5 Q0.5 1.5 1.5 1.5 H5.5 L6.5 3 H10.5 Q11.5 3 11.5 4 V10.5 Q11.5 11.5 10.5 11.5 H1.5 Q0.5 11.5 0.5 10.5 Z" fill="#f1f0ee" stroke="#9a9893"/></svg><div class="t" style="left:67.5px;top:62.5px;font-size:12.4px;color:#1f1f1f;font-weight:normal;font-style:normal;">raw_data</div><svg style="position:absolute;left:34px;top:81px" width="10" height="6" viewBox="0 0 10 6" ><path d="M0.5 0.8 L8.5 0.8 L4.5 5 Z" fill="#404040"/></svg><svg style="position:absolute;left:50px;top:77px" width="12" height="12" viewBox="0 0 12 12" ><path d="M0.5 2.5 Q0.5 1.5 1.5 1.5 H5.5 L6.5 3 H10.5 Q11.5 3 11.5 4 V10.5 Q11.5 11.5 10.5 11.5 H1.5 Q0.5 11.5 0.5 10.5 Z" fill="#f1f0ee" stroke="#9a9893"/><path d="M1 4.5 H11" stroke="#9a9893"/></svg><div class="t" style="left:67.5px;top:77.5px;font-size:12.4px;color:#1f1f1f;font-weight:normal;font-style:normal;">temp_data</div><svg style="position:absolute;left:53px;top:94px" width="6" height="9" viewBox="0 0 6 9" ><path d="M0.5 0.5 L4.8 4.5 L0.5 8.5 Z" fill="#404040"/></svg><svg style="position:absolute;left:67px;top:92px" width="11" height="12" viewBox="0 0 11 12" ><ellipse cx="5.5" cy="2.5" rx="5" ry="2" fill="#f4f4f2" stroke="#8f8d88"/><path d="M0.5 2.5 V9.5 C0.5 11.5 10.5 11.5 10.5 9.5 V2.5" fill="#f4f4f2" stroke="#8f8d88"/><path d="M0.5 6 C0.5 8 10.5 8 10.5 6" fill="none" stroke="#8f8d88"/></svg><div class="t" style="left:83.5px;top:92.5px;font-size:12.4px;color:#1f1f1f;font-weight:normal;font-style:normal;">boundary.sqlite</div><svg style="position:absolute;left:53px;top:109px" width="6" height="9" viewBox="0 0 6 9" ><path d="M0.5 0.5 L4.8 4.5 L0.5 8.5 Z" fill="#404040"/></svg><svg style="position:absolute;left:67px;top:107px" width="11" height="12" viewBox="0 0 11 12" ><ellipse cx="5.5" cy="2.5" rx="5" ry="2" fill="#f4f4f2" stroke="#8f8d88"/><path d="M0.5 2.5 V9.5 C0.5 11.5 10.5 11.5 10.5 9.5 V2.5" fill="#f4f4f2" stroke="#8f8d88"/><path d="M0.5 6 C0.5 8 10.5 8 10.5 6" fill="none" stroke="#8f8d88"/></svg><div class="t" style="left:83.5px;top:107.5px;font-size:12.4px;color:#1f1f1f;font-weight:normal;font-style:normal;">boundary2.sqlite</div><svg style="position:absolute;left:67px;top:123px" width="11" height="11" viewBox="0 0 11 11" ><rect x="0.00" y="0.00" width="3.5" height="3.5" fill="#1b2b42"/><rect x="3.50" y="0.00" width="3.5" height="3.5" fill="#b3cbe8"/><rect x="7.00" y="0.00" width="3.5" height="3.5" fill="#1b2b42"/><rect x="0.00" y="3.50" width="3.5" height="3.5" fill="#b3cbe8"/><rect x="3.50" y="3.50" width="3.5" height="3.5" fill="#1b2b42"/><rect x="7.00" y="3.50" width="3.5" height="3.5" fill="#b3cbe8"/><rect x="0.00" y="7.00" width="3.5" height="3.5" fill="#1b2b42"/><rect x="3.50" y="7.00" width="3.5" height="3.5" fill="#b3cbe8"/></svg><div class="t" style="left:83.5px;top:122.5px;font-size:12.4px;color:#1f1f1f;font-weight:normal;font-style:normal;">classified-color.png</div><svg style="position:absolute;left:67px;top:139px" width="11" height="11" viewBox="0 0 11 11" ><rect x="0.00" y="0.00" width="3.5" height="3.5" fill="#1b2b42"/><rect x="3.50" y="0.00" width="3.5" height="3.5" fill="#b3cbe8"/><rect x="7.00" y="0.00" width="3.5" height="3.5" fill="#1b2b42"/><rect x="0.00" y="3.50" width="3.5" height="3.5" fill="#b3cbe8"/><rect x="3.50" y="3.50" width="3.5" height="3.5" fill="#1b2b42"/><rect x="7.00" y="3.50" width="3.5" height="3.5" fill="#b3cbe8"/><rect x="0.00" y="7.00" width="3.5" height="3.5" fill="#1b2b42"/><rect x="3.50" y="7.00" width="3.5" height="3.5" fill="#b3cbe8"/></svg><div class="t" style="left:83.5px;top:138.5px;font-size:12.4px;color:#1f1f1f;font-weight:normal;font-style:normal;">dtm.tif</div><svg style="position:absolute;left:67px;top:154px" width="11" height="11" viewBox="0 0 11 11" ><rect x="0.00" y="0.00" width="3.5" height="3.5" fill="#1b2b42"/><rect x="3.50" y="0.00" width="3.5" height="3.5" fill="#b3cbe8"/><rect x="7.00" y="0.00" width="3.5" height="3.5" fill="#1b2b42"/><rect x="0.00" y="3.50" width="3.5" height="3.5" fill="#b3cbe8"/><rect x="3.50" y="3.50" width="3.5" height="3.5" fill="#1b2b42"/><rect x="7.00" y="3.50" width="3.5" height="3.5" fill="#b3cbe8"/><rect x="0.00" y="7.00" width="3.5" height="3.5" fill="#1b2b42"/><rect x="3.50" y="7.00" width="3.5" height="3.5" fill="#b3cbe8"/></svg><div class="t" style="left:83.5px;top:153.5px;font-size:12.4px;color:#1f1f1f;font-weight:normal;font-style:normal;">hillshade.tif</div><div class="a" style="left:0;top:167px;width:194px;height:15px;background:#308cc6"></div><svg style="position:absolute;left:67px;top:169px" width="11" height="11" viewBox="0 0 11 11" ><rect x="0.00" y="0.00" width="3.5" height="3.5" fill="#1b2b42"/><rect x="3.50" y="0.00" width="3.5" height="3.5" fill="#b3cbe8"/><rect x="7.00" y="0.00" width="3.5" height="3.5" fill="#1b2b42"/><rect x="0.00" y="3.50" width="3.5" height="3.5" fill="#b3cbe8"/><rect x="3.50" y="3.50" width="3.5" height="3.5" fill="#1b2b42"/><rect x="7.00" y="3.50" width="3.5" height="3.5" fill="#b3cbe8"/><rect x="0.00" y="7.00" width="3.5" height="3.5" fill="#1b2b42"/><rect x="3.50" y="7.00" width="3.5" height="3.5" fill="#b3cbe8"/></svg><div class="t" style="left:83.5px;top:168.5px;font-size:12.4px;color:#fff;font-weight:normal;font-style:normal;">intensity.png</div><svg style="position:absolute;left:67px;top:184px" width="11" height="11" viewBox="0 0 11 11" ><rect x="0.00" y="0.00" width="3.5" height="3.5" fill="#1b2b42"/><rect x="3.50" y="0.00" width="3.5" height="3.5" fill="#b3cbe8"/><rect x="7.00" y="0.00" width="3.5" height="3.5" fill="#1b2b42"/><rect x="0.00" y="3.50" width="3.5" height="3.5" fill="#b3cbe8"/><rect x="3.50" y="3.50" width="3.5" height="3.5" fill="#1b2b42"/><rect x="7.00" y="3.50" width="3.5" height="3.5" fill="#b3cbe8"/><rect x="0.00" y="7.00" width="3.5" height="3.5" fill="#1b2b42"/><rect x="3.50" y="7.00" width="3.5" height="3.5" fill="#b3cbe8"/></svg><div class="t" style="left:83.5px;top:183.5px;font-size:12.4px;color:#1f1f1f;font-weight:normal;font-style:normal;">intensity.tif</div><svg style="position:absolute;left:67px;top:199px" width="11" height="11" viewBox="0 0 11 11" ><rect x="0.00" y="0.00" width="3.5" height="3.5" fill="#1b2b42"/><rect x="3.50" y="0.00" width="3.5" height="3.5" fill="#b3cbe8"/><rect x="7.00" y="0.00" width="3.5" height="3.5" fill="#1b2b42"/><rect x="0.00" y="3.50" width="3.5" height="3.5" fill="#b3cbe8"/><rect x="3.50" y="3.50" width="3.5" height="3.5" fill="#1b2b42"/><rect x="7.00" y="3.50" width="3.5" height="3.5" fill="#b3cbe8"/><rect x="0.00" y="7.00" width="3.5" height="3.5" fill="#1b2b42"/><rect x="3.50" y="7.00" width="3.5" height="3.5" fill="#b3cbe8"/></svg><div class="t" style="left:83.5px;top:198.5px;font-size:12.4px;color:#1f1f1f;font-weight:normal;font-style:normal;">yose-classification.tif</div></div><div class="a" style="left:194px;top:174px;width:11px;height:201px;background:#e3e1dd;border-left:1px solid #c4c0b9"></div><div class="a" style="left:195px;top:174px;width:10px;height:11px;background:#f8f7f6;border-bottom:1px solid #d6d3cd"></div><svg style="position:absolute;left:196px;top:177px" width="8" height="5" viewBox="0 0 8 5" ><path d="M0.5 4.5 L4 1 L7.5 4.5Z" fill="#3c3c3c"/></svg><div class="a" style="left:195px;top:258px;width:10px;height:37px;background:#f8f7f6;border-top:1px solid #d0cdc7;border-bottom:1px solid #d0cdc7"></div><div class="a" style="left:195px;top:364px;width:10px;height:11px;background:#f8f7f6;border-top:1px solid #d6d3cd"></div><svg style="position:absolute;left:196px;top:368px" width="8" height="5" viewBox="0 0 8 5" ><path d="M0.5 0.5 L4 4 L7.5 0.5Z" fill="#3c3c3c"/></svg><div class="a" style="left:0;top:375px;width:205px;height:1px;background:#c4c0b9"></div><div class="a" style="left:0;top:376px;width:194px;height:10px;background:#e3e1dd"></div><div class="a" style="left:0;top:376px;width:10px;height:10px;background:#f8f7f6"></div><svg style="position:absolute;left:3px;top:378px" width="5" height="7" viewBox="0 0 5 7" ><path d="M4 0.5 L0.5 3.5 L4 6.5Z" fill="#3c3c3c"/></svg><div class="a" style="left:10px;top:376px;width:168px;height:10px;background:#f8f7f6;border-left:1px solid #d0cdc7;border-right:1px solid #d0cdc7"></div><div class="a" style="left:183px;top:376px;width:11px;height:10px;background:#f8f7f6;border-left:1px solid #d0cdc7"></div><svg style="position:absolute;left:187px;top:378px" width="5" height="7" viewBox="0 0 5 7" ><path d="M0.5 0.5 L4 3.5 L0.5 6.5Z" fill="#3c3c3c"/></svg><div class="a" style="left:194px;top:375px;width:11px;height:11px;background:#efedea;border-left:1px solid #c4c0b9;border-top:1px solid #c4c0b9"></div><div class="a" style="left:96px;top:389px;width:1px;height:1px;background:#b9b5ae"></div><div class="a" style="left:99px;top:389px;width:1px;height:1px;background:#b9b5ae"></div><div class="a" style="left:102px;top:389px;width:1px;height:1px;background:#b9b5ae"></div><div class="a" style="left:105px;top:389px;width:1px;height:1px;background:#b9b5ae"></div><div class="a" style="left:108px;top:389px;width:1px;height:1px;background:#b9b5ae"></div><div class="a" style="left:111px;top:389px;width:1px;height:1px;background:#b9b5ae"></div><div class="t" style="left:2px;top:394px;font-size:12px;color:#1f1f1f;font-weight:normal;font-style:normal;">Layers</div><svg style="position:absolute;left:184px;top:395px" width="22" height="10" viewBox="0 0 22 10" ><rect x="0.5" y="0.5" width="9" height="9" rx="1.5" fill="#f4f3f1" stroke="#8e8b85"/><rect x="2.5" y="3" width="5" height="4.5" fill="none" stroke="#6e6b66" stroke-width="0.9"/><rect x="11.5" y="0.5" width="9" height="9" rx="1.5" fill="#f4f3f1" stroke="#8e8b85"/><path d="M13.8 2.8 L18.2 7.2 M18.2 2.8 L13.8 7.2" stroke="#4a4844" stroke-width="1.4"/></svg><svg style="position:absolute;left:5px;top:413px" width="15" height="13" viewBox="0 0 15 13" ><path d="M1 9 L6 4 L10 8 L5 12Z" fill="#e8c542"/><path d="M1 9 L3.5 6.5 L5 11Z" fill="#d9603a"/><path d="M8 6 L14 0.5" stroke="#8a6a3a" stroke-width="2"/><path d="M1.5 9.5 L5 12 L3 8Z" fill="#4f7fbf"/></svg><svg style="position:absolute;left:25px;top:412px" width="14" height="15" viewBox="0 0 14 15" ><rect x="3.5" y="2.5" width="6" height="9" fill="#f0efed" stroke="#7a7873"/><rect x="0.5" y="5.5" width="6" height="8" fill="#f0efed" stroke="#7a7873"/><rect x="5" y="0.5" width="3" height="3" fill="#7a7873"/><rect x="9" y="9" width="5" height="5" fill="#4b9a4b"/></svg><svg style="position:absolute;left:45px;top:413px" width="18" height="13" viewBox="0 0 18 13" ><path d="M0.5 5 C4 0 10 0 13.5 5 C10 10 4 10 0.5 5Z" fill="#ececec" stroke="#7a7a7a"/><circle cx="7" cy="5" r="2.8" fill="#4f7fbf"/><circle cx="7" cy="5" r="1.2" fill="#1d2a3a"/><path d="M12 9.5 H17 L14.5 12.5Z" fill="#333"/></svg><svg style="position:absolute;left:65px;top:412px" width="13" height="14" viewBox="0 0 13 14" ><path d="M0.5 0.5 H11.5 V2.5 L7.5 7 V13.5 L4.5 12 V7 L0.5 2.5 Z" fill="#6d97c6" stroke="#4a74a8" stroke-width="0.6"/><rect x="0.5" y="0.5" width="11" height="2" fill="#e2cf4a"/></svg><svg style="position:absolute;left:85px;top:412px" width="22" height="14" viewBox="0 0 22 14" ><text x="0" y="10" font-size="11" font-family="Liberation Serif" fill="#cfccc6">ε</text><path d="M5 7 V13 H10 V7" fill="none" stroke="#d8d5cf"/><path d="M14 5.5 H21 L17.5 9.5Z" fill="#d3d0ca"/></svg><svg style="position:absolute;left:115px;top:412px" width="14" height="14" viewBox="0 0 14 14" ><rect x="0.5" y="1.5" width="5" height="11" fill="#f2f1ef" stroke="#9a9893" stroke-width="0.7"/><rect x="2" y="4" width="2" height="2" fill="#e8921c"/><rect x="2" y="9" width="2" height="2" fill="#e8921c"/><path d="M9 1 V11 M5.5 7.5 L9 12.5 L12.5 7.5" stroke="#2f5a90" stroke-width="1.8" fill="none"/></svg><svg style="position:absolute;left:135px;top:412px" width="14" height="14" viewBox="0 0 14 14" ><rect x="0.5" y="1.5" width="5" height="11" fill="#f2f1ef" stroke="#9a9893" stroke-width="0.7"/><rect x="2" y="4" width="2" height="2" fill="#e8921c"/><rect x="2" y="9" width="2" height="2" fill="#e8921c"/><path d="M9 13 V3 M5.5 6.5 L9 1.5 L12.5 6.5" stroke="#2f5a90" stroke-width="1.8" fill="none"/></svg><svg style="position:absolute;left:155px;top:412px" width="14" height="14" viewBox="0 0 14 14" ><rect x="0.5" y="0.5" width="10" height="10" fill="#f2f1ef" stroke="#8e8c88"/><rect x="7" y="9" width="6.5" height="4.5" rx="2" fill="#e0303a"/><path d="M8.5 11.2 H12" stroke="#fff"/></svg><div class="a" style="left:0;top:431px;width:206px;height:255px;background:#fff;border:1px solid #bcb8b1;border-left:none"></div><div class="a" style="left:0;top:432px;width:204px;height:16px;background:#308cc6"></div><div class="a" style="left:201px;top:434px;width:2px;height:12px;background:#e8eef5"></div><svg style="position:absolute;left:2px;top:438px" width="10" height="6" viewBox="0 0 10 6" ><path d="M0.5 0.8 L8.5 0.8 L4.5 5 Z" fill="#404040"/></svg><svg style="position:absolute;left:17px;top:434px" width="12" height="12" viewBox="0 0 12 12" ><rect x="0.5" y="0.5" width="11" height="11" rx="1" fill="#fff" stroke="#6f6c66"/><path d="M2.5 6 L5 9 L9.5 2" stroke="#111" stroke-width="1.5" fill="none"/></svg><svg style="position:absolute;left:35px;top:435px" width="11" height="11" viewBox="0 0 11 11" ><rect x="0.00" y="0.00" width="3.5" height="3.5" fill="#1b2b42"/><rect x="3.50" y="0.00" width="3.5" height="3.5" fill="#b3cbe8"/><rect x="7.00" y="0.00" width="3.5" height="3.5" fill="#1b2b42"/><rect x="0.00" y="3.50" width="3.5" height="3.5" fill="#b3cbe8"/><rect x="3.50" y="3.50" width="3.5" height="3.5" fill="#1b2b42"/><rect x="7.00" y="3.50" width="3.5" height="3.5" fill="#b3cbe8"/><rect x="0.00" y="7.00" width="3.5" height="3.5" fill="#1b2b42"/><rect x="3.50" y="7.00" width="3.5" height="3.5" fill="#b3cbe8"/></svg><div class="t" style="left:51px;top:434px;font-size:12.1px;color:#fff;font-weight:bold;font-style:normal;"><u>intensity</u></div><div class="a" style="left:33px;top:448px;width:13px;height:13px;background:#000"></div><div class="t" style="left:51px;top:450px;font-size:12px;color:#1f1f1f;font-weight:normal;font-style:normal;">0</div><div class="t" style="left:51px;top:465px;font-size:12px;color:#1f1f1f;font-weight:normal;font-style:normal;">255</div><div class="a" style="left:201px;top:479px;width:3px;height:13px;background:#f0efed"></div><svg style="position:absolute;left:5px;top:482px" width="6" height="9" viewBox="0 0 6 9" ><path d="M0.5 0.5 L4.8 4.5 L0.5 8.5 Z" fill="#404040"/></svg><svg style="position:absolute;left:17px;top:480px" width="12" height="12" viewBox="0 0 12 12" ><rect x="0.5" y="0.5" width="11" height="11" rx="1" fill="#fff" stroke="#c4c1bb"/></svg><svg style="position:absolute;left:35px;top:481px" width="11" height="11" viewBox="0 0 11 11" ><rect x="0.00" y="0.00" width="3.5" height="3.5" fill="#1b2b42"/><rect x="3.50" y="0.00" width="3.5" height="3.5" fill="#b3cbe8"/><rect x="7.00" y="0.00" width="3.5" height="3.5" fill="#1b2b42"/><rect x="0.00" y="3.50" width="3.5" height="3.5" fill="#b3cbe8"/><rect x="3.50" y="3.50" width="3.5" height="3.5" fill="#1b2b42"/><rect x="7.00" y="3.50" width="3.5" height="3.5" fill="#b3cbe8"/><rect x="0.00" y="7.00" width="3.5" height="3.5" fill="#1b2b42"/><rect x="3.50" y="7.00" width="3.5" height="3.5" fill="#b3cbe8"/></svg><div class="t" style="left:51.5px;top:480px;font-size:11.6px;color:#858585;font-weight:bold;font-style:italic;">intensity</div><div class="a" style="left:201px;top:494px;width:3px;height:13px;background:#f0efed"></div><svg style="position:absolute;left:17px;top:495px" width="12" height="12" viewBox="0 0 12 12" ><rect x="0.5" y="0.5" width="11" height="11" rx="1" fill="#fff" stroke="#c4c1bb"/></svg><svg style="position:absolute;left:35px;top:496px" width="11" height="11" viewBox="0 0 11 11" ><rect x="0.00" y="0.00" width="3.5" height="3.5" fill="#1b2b42"/><rect x="3.50" y="0.00" width="3.5" height="3.5" fill="#b3cbe8"/><rect x="7.00" y="0.00" width="3.5" height="3.5" fill="#1b2b42"/><rect x="0.00" y="3.50" width="3.5" height="3.5" fill="#b3cbe8"/><rect x="3.50" y="3.50" width="3.5" height="3.5" fill="#1b2b42"/><rect x="7.00" y="3.50" width="3.5" height="3.5" fill="#b3cbe8"/><rect x="0.00" y="7.00" width="3.5" height="3.5" fill="#1b2b42"/><rect x="3.50" y="7.00" width="3.5" height="3.5" fill="#b3cbe8"/></svg><div class="t" style="left:51.5px;top:495px;font-size:11.6px;color:#858585;font-weight:bold;font-style:italic;">classified-color</div><div class="a" style="left:201px;top:509px;width:3px;height:13px;background:#f0efed"></div><svg style="position:absolute;left:5px;top:512px" width="6" height="9" viewBox="0 0 6 9" ><path d="M0.5 0.5 L4.8 4.5 L0.5 8.5 Z" fill="#404040"/></svg><svg style="position:absolute;left:17px;top:510px" width="12" height="12" viewBox="0 0 12 12" ><rect x="0.5" y="0.5" width="11" height="11" rx="1" fill="#fff" stroke="#c4c1bb"/></svg><svg style="position:absolute;left:35px;top:511px" width="11" height="11" viewBox="0 0 11 11" ><rect x="0.00" y="0.00" width="3.5" height="3.5" fill="#1b2b42"/><rect x="3.50" y="0.00" width="3.5" height="3.5" fill="#b3cbe8"/><rect x="7.00" y="0.00" width="3.5" height="3.5" fill="#1b2b42"/><rect x="0.00" y="3.50" width="3.5" height="3.5" fill="#b3cbe8"/><rect x="3.50" y="3.50" width="3.5" height="3.5" fill="#1b2b42"/><rect x="7.00" y="3.50" width="3.5" height="3.5" fill="#b3cbe8"/><rect x="0.00" y="7.00" width="3.5" height="3.5" fill="#1b2b42"/><rect x="3.50" y="7.00" width="3.5" height="3.5" fill="#b3cbe8"/></svg><div class="t" style="left:51.5px;top:510px;font-size:11.6px;color:#858585;font-weight:bold;font-style:italic;">yose-classification</div><div class="a" style="left:201px;top:524px;width:3px;height:13px;background:#f0efed"></div><svg style="position:absolute;left:5px;top:527px" width="6" height="9" viewBox="0 0 6 9" ><path d="M0.5 0.5 L4.8 4.5 L0.5 8.5 Z" fill="#404040"/></svg><svg style="position:absolute;left:17px;top:525px" width="12" height="12" viewBox="0 0 12 12" ><rect x="0.5" y="0.5" width="11" height="11" rx="1" fill="#fff" stroke="#c4c1bb"/></svg><svg style="position:absolute;left:35px;top:526px" width="11" height="11" viewBox="0 0 11 11" ><rect x="0.00" y="0.00" width="3.5" height="3.5" fill="#1b2b42"/><rect x="3.50" y="0.00" width="3.5" height="3.5" fill="#b3cbe8"/><rect x="7.00" y="0.00" width="3.5" height="3.5" fill="#1b2b42"/><rect x="0.00" y="3.50" width="3.5" height="3.5" fill="#b3cbe8"/><rect x="3.50" y="3.50" width="3.5" height="3.5" fill="#1b2b42"/><rect x="7.00" y="3.50" width="3.5" height="3.5" fill="#b3cbe8"/><rect x="0.00" y="7.00" width="3.5" height="3.5" fill="#1b2b42"/><rect x="3.50" y="7.00" width="3.5" height="3.5" fill="#b3cbe8"/></svg><div class="t" style="left:51.5px;top:525px;font-size:11.6px;color:#858585;font-weight:bold;font-style:italic;">hillshade</div><svg style="position:absolute;left:187px;top:524px" width="13" height="14" viewBox="0 0 13 14" ><rect x="0" y="0" width="13" height="14" fill="#ebe9e5"/><circle cx="6.5" cy="7" r="5" fill="none" stroke="#777" stroke-width="0.8"/><text x="3.7" y="10.5" font-size="9.5" font-weight="bold" font-family="Liberation Sans" fill="#555">?</text></svg><div class="a" style="left:201px;top:539px;width:3px;height:13px;background:#f0efed"></div><svg style="position:absolute;left:17px;top:540px" width="12" height="12" viewBox="0 0 12 12" ><rect x="0.5" y="0.5" width="11" height="11" rx="1" fill="#fff" stroke="#c4c1bb"/></svg><svg style="position:absolute;left:35px;top:541px" width="11" height="11" viewBox="0 0 11 11" ><rect x="0.00" y="0.00" width="3.5" height="3.5" fill="#1b2b42"/><rect x="3.50" y="0.00" width="3.5" height="3.5" fill="#b3cbe8"/><rect x="7.00" y="0.00" width="3.5" height="3.5" fill="#1b2b42"/><rect x="0.00" y="3.50" width="3.5" height="3.5" fill="#b3cbe8"/><rect x="3.50" y="3.50" width="3.5" height="3.5" fill="#1b2b42"/><rect x="7.00" y="3.50" width="3.5" height="3.5" fill="#b3cbe8"/><rect x="0.00" y="7.00" width="3.5" height="3.5" fill="#1b2b42"/><rect x="3.50" y="7.00" width="3.5" height="3.5" fill="#b3cbe8"/></svg><div class="t" style="left:51.5px;top:540px;font-size:11.6px;color:#858585;font-weight:bold;font-style:italic;">dtm</div><svg style="position:absolute;left:187px;top:539px" width="13" height="14" viewBox="0 0 13 14" ><rect x="0" y="0" width="13" height="14" fill="#ebe9e5"/><circle cx="6.5" cy="7" r="5" fill="none" stroke="#777" stroke-width="0.8"/><text x="3.7" y="10.5" font-size="9.5" font-weight="bold" font-family="Liberation Sans" fill="#555">?</text></svg><div class="a" style="left:201px;top:554px;width:3px;height:13px;background:#f0efed"></div><svg style="position:absolute;left:17px;top:555px" width="12" height="12" viewBox="0 0 12 12" ><rect x="0.5" y="0.5" width="11" height="11" rx="1" fill="#fff" stroke="#c4c1bb"/></svg><div class="a" style="left:33px;top:554px;width:13px;height:13px;background:#c23b3b;border:1px solid #a83030"></div><div class="t" style="left:51.5px;top:555px;font-size:11.6px;color:#858585;font-weight:bold;font-style:italic;">clipper</div><div class="a" style="left:201px;top:570px;width:3px;height:13px;background:#f0efed"></div><svg style="position:absolute;left:17px;top:571px" width="12" height="12" viewBox="0 0 12 12" ><rect x="0.5" y="0.5" width="11" height="11" rx="1" fill="#fff" stroke="#c4c1bb"/></svg><div class="a" style="left:33px;top:570px;width:13px;height:13px;background:#fff;border:1px solid #7fdc7f"></div><div class="t" style="left:51.5px;top:571px;font-size:11.6px;color:#858585;font-weight:bold;font-style:italic;">AOI</div><div class="a" style="left:201px;top:585px;width:3px;height:13px;background:#f0efed"></div><svg style="position:absolute;left:17px;top:586px" width="12" height="12" viewBox="0 0 12 12" ><rect x="0.5" y="0.5" width="11" height="11" rx="1" fill="#fff" stroke="#c4c1bb"/></svg><div class="a" style="left:33px;top:585px;width:13px;height:13px;background:#fff;border:1px solid #f0a0a0"></div><div class="t" style="left:51.5px;top:586px;font-size:11.6px;color:#858585;font-weight:bold;font-style:italic;">ept_yose_to_laz</div><div class="a" style="left:201px;top:600px;width:3px;height:13px;background:#f0efed"></div><svg style="position:absolute;left:17px;top:601px" width="12" height="12" viewBox="0 0 12 12" ><rect x="0.5" y="0.5" width="11" height="11" rx="1" fill="#fff" stroke="#c4c1bb"/></svg><div class="a" style="left:33px;top:600px;width:13px;height:13px;background:#fff;border:1px solid #f4b89a"></div><div class="t" style="left:51.5px;top:601px;font-size:11.6px;color:#858585;font-weight:bold;font-style:italic;">ept_yose_to_laz</div><div class="a" style="left:201px;top:615px;width:3px;height:13px;background:#f0efed"></div><svg style="position:absolute;left:2px;top:620px" width="10" height="6" viewBox="0 0 10 6" ><path d="M0.5 0.8 L8.5 0.8 L4.5 5 Z" fill="#404040"/></svg><svg style="position:absolute;left:17px;top:616px" width="12" height="12" viewBox="0 0 12 12" ><rect x="0.5" y="0.5" width="11" height="11" rx="1" fill="#fff" stroke="#6f6c66"/><path d="M2.5 6 L5 9 L9.5 2" stroke="#111" stroke-width="1.5" fill="none"/></svg><svg style="position:absolute;left:35px;top:617px" width="11" height="11" viewBox="0 0 11 11" ><rect x="0.00" y="0.00" width="3.5" height="3.5" fill="#1b2b42"/><rect x="3.50" y="0.00" width="3.5" height="3.5" fill="#b3cbe8"/><rect x="7.00" y="0.00" width="3.5" height="3.5" fill="#1b2b42"/><rect x="0.00" y="3.50" width="3.5" height="3.5" fill="#b3cbe8"/><rect x="3.50" y="3.50" width="3.5" height="3.5" fill="#1b2b42"/><rect x="7.00" y="3.50" width="3.5" height="3.5" fill="#b3cbe8"/><rect x="0.00" y="7.00" width="3.5" height="3.5" fill="#1b2b42"/><rect x="3.50" y="7.00" width="3.5" height="3.5" fill="#b3cbe8"/></svg><div class="t" style="left:51px;top:616px;font-size:12.3px;color:#111;font-weight:bold;font-style:normal;">OpenStreetMap</div><div class="a" style="left:209px;top:405px;width:1px;height:1px;background:#b9b5ae"></div><div class="a" style="left:209px;top:408px;width:1px;height:1px;background:#b9b5ae"></div><div class="a" style="left:209px;top:411px;width:1px;height:1px;background:#b9b5ae"></div><div class="a" style="left:209px;top:414px;width:1px;height:1px;background:#b9b5ae"></div><div class="a" style="left:209px;top:417px;width:1px;height:1px;background:#b9b5ae"></div><svg style="position:absolute;left:211px;top:133px" width="789" height="553" viewBox="211 133 789 553">
<defs>
<filter id="nz" x="0" y="0" width="100%" height="100%" color-interpolation-filters="sRGB">
 <feTurbulence type="fractalNoise" baseFrequency="0.025" numOctaves="2" seed="4" result="low"/>
 <feTurbulence type="fractalNoise" baseFrequency="0.2" numOctaves="3" seed="21" result="mid"/>
 <feTurbulence type="fractalNoise" baseFrequency="0.85" numOctaves="1" seed="9" result="hi"/>
 <feTurbulence type="fractalNoise" baseFrequency="0.95" numOctaves="1" seed="13" result="sp"/>
 <feColorMatrix in="low" type="matrix" values="1 0 0 0 0  1 0 0 0 0  1 0 0 0 0  0 0 0 0 1" result="lowg"/>
 <feColorMatrix in="mid" type="matrix" values="1 0 0 0 0  1 0 0 0 0  1 0 0 0 0  0 0 0 0 1" result="midg"/>
 <feColorMatrix in="hi" type="matrix" values="1 0 0 0 0  1 0 0 0 0  1 0 0 0 0  0 0 0 0 1" result="hig"/>
 <feColorMatrix in="sp" type="matrix" values="0 0 0 0 1  0 0 0 0 1  0 0 0 0 1  9 0 0 0 -5.1" result="spw"/>
 <feComposite in="SourceGraphic" in2="lowg" operator="arithmetic" k1="0" k2="1" k3="0.7" k4="-0.35" result="s1"/>
 <feComposite in="s1" in2="midg" operator="arithmetic" k1="0" k2="1" k3="1.0" k4="-0.5" result="s2"/>
 <feComposite in="s2" in2="hig" operator="arithmetic" k1="0" k2="1" k3="0.8" k4="-0.4" result="s3"/>
 <feComposite in="spw" in2="s3" operator="over"/>
</filter>
<filter id="blr" x="-50%" y="-50%" width="200%" height="200%"><feGaussianBlur stdDeviation="14"/></filter>
<filter id="nz2" x="0" y="0" width="100%" height="100%" color-interpolation-filters="sRGB">
 <feTurbulence type="fractalNoise" baseFrequency="0.4" numOctaves="2" seed="11" result="n"/>
 <feColorMatrix in="n" type="matrix" values="1 0 0 0 0  1 0 0 0 0  1 0 0 0 0  0 0 0 0 1" result="g"/>
 <feComposite in="SourceGraphic" in2="g" operator="arithmetic" k1="0" k2="1" k3="0.22" k4="-0.11" result="r"/><feComposite in="r" in2="SourceGraphic" operator="in"/>
</filter>
<linearGradient id="bg1" x1="0" y1="1" x2="1" y2="0">
 <stop offset="0" stop-color="#5e5e5e"/><stop offset="0.45" stop-color="#7c7c7c"/><stop offset="0.8" stop-color="#949494"/><stop offset="1" stop-color="#9e9e9e"/>
</linearGradient>
<clipPath id="blobclip"><path d="M407.8 454 L412.8 451 L419.7 443 L418.7 431.4 L434.5 421.5 L431.6 407.7 L432.5 402.7 L454 396 L472 388 L470 380 L482 367 L493 365 L510 352 L521 353 L547 342 L558 335 L575 325 L597 319 L605.6 316.7 L628 305 L637 301 L645 297 L652 297 L656 291 L668 288.5 L699 288.5 L704 294 L721 297 L733 293 L738 302.6 L744 308 L747 319.5 L758 321 L769 325 L771 343.5 L756.5 345 L755 350.5 L755 367.5 L771 373 L771.5 421 L766 438 L747 449 L727 459 L706 467 L684 479 L664 487.2 L636 506.8 L613.6 511 L608 532 L582.8 537.6 L585.6 547.4 L563.2 550.2 L560.4 544.6 L549.2 547.4 L552 554.4 L540.8 558.6 L526.8 560 L524 565.6 L510 572.6 L504.4 553 L486.2 557.2 L484.8 540.4 L473.6 537.6 L468 520.8 L459.6 504 L448.4 504 L446.4 506.5 L444.4 498.6 L439.5 484.7 L438.5 476.8 L426.6 472.9 L407.8 476.8 Z"/></clipPath>
</defs>
<rect x="211" y="133" width="789" height="553" fill="#f0ede8"/>
<path d="M211 508 L240 508 L240 593 L515 593 L499.2 649.7 L422.7 672.5 L388.7 656.5 L381.9 661.6 L361.5 653 L347.9 653 L330.8 661.6 L317.2 671.8 L312.1 686 L298.5 686 L295 668 L278 661.6 L269.6 651.4 L261 653 L256 658 L249 651.4 L242.4 653 L237.3 648 L230.5 651.4 L215.2 649.7 L211 652 Z" fill="#cce0bd"/>
<g fill="none" stroke-linejoin="round" stroke-linecap="round">
<path id="rd1" d="M211 652 L215.2 649.7 L230.5 651.4 L237.3 648 L242.4 653 L249 651.4 L256 658 L261 653 L269.6 651.4 L278 661.6 L295 668 L298.5 686" stroke="#c8c6c2" stroke-width="4"/>
<path d="M211 652 L215.2 649.7 L230.5 651.4 L237.3 648 L242.4 653 L249 651.4 L256 658 L261 653 L269.6 651.4 L278 661.6 L295 668 L298.5 686" stroke="#fff" stroke-width="2.4"/>
<path d="M312.1 686 L317.2 671.8 L330.8 661.6 L347.9 653 L361.5 653 L381.9 661.6 L388.7 656.5 L422.7 672.5 L443 684 L456.7 684 L470.3 671.8 L494 682 L528 678.6 L535 668.4 L531.5 654.8 L526.4 624.2 L521.3 607.2 L524.7 593.6" stroke="#c8c6c2" stroke-width="4"/>
<path d="M312.1 686 L317.2 671.8 L330.8 661.6 L347.9 653 L361.5 653 L381.9 661.6 L388.7 656.5 L422.7 672.5 L443 684 L456.7 684 L470.3 671.8 L494 682 L528 678.6 L535 668.4 L531.5 654.8 L526.4 624.2 L521.3 607.2 L524.7 593.6" stroke="#fff" stroke-width="2.4"/>
<path d="M211 655 C214 665 216 675 213 686" stroke="#fff" stroke-width="2.4"/>
</g>
<g fill="#e3e0d6" opacity="0.9">
<ellipse cx="333" cy="640" rx="6" ry="3"/><ellipse cx="480" cy="640" rx="10" ry="4" transform="rotate(-40 480 640)"/><ellipse cx="297" cy="617" rx="5" ry="3"/><ellipse cx="361" cy="611" rx="6" ry="3"/>
</g>
<g fill="#dcebd0"><ellipse cx="285" cy="622" rx="8" ry="6"/><ellipse cx="270" cy="614" rx="6" ry="4"/></g>
<g fill="#4b9be0"><rect x="318" y="612" width="5" height="2"/><rect x="336" y="627" width="4" height="2"/><rect x="357" y="613" width="4" height="2"/><rect x="402" y="625" width="4" height="2"/><rect x="403" y="638" width="5" height="2"/><rect x="392" y="642" width="4" height="2"/><rect x="436" y="628" width="4" height="2"/><rect x="437" y="640" width="5" height="2"/><rect x="438" y="648" width="4" height="2"/><rect x="482" y="617" width="4" height="2"/><rect x="331" y="597" width="3" height="2"/></g>
<path d="M212 468 C218 471 222 476 232 476 M212 481 C220 483 224 487 232 487 M212 503 C218 508 226 508 232 502 M212 591 C219 595 219 601 212 605" fill="none" stroke="#e6a85e" stroke-width="3"/>
<path d="M212 468 C218 471 222 476 232 476 M212 481 C220 483 224 487 232 487 M212 503 C218 508 226 508 232 502 M212 591 C219 595 219 601 212 605" fill="none" stroke="#f6c98c" stroke-width="1.2"/>
<path d="M359.0 133.0 C360.7 137.2 368.3 151.8 369.0 158.0 C369.7 164.2 366.0 168.0 363.0 170.0 C360.0 172.0 355.3 168.7 351.0 170.0 C346.7 171.3 341.3 174.7 337.0 178.0 C332.7 181.3 327.7 186.3 325.0 190.0 C322.3 193.7 323.0 197.3 321.0 200.0 C319.0 202.7 316.3 203.8 313.0 206.0 C309.7 208.2 305.7 213.0 301.0 213.0 C296.3 213.0 290.0 208.0 285.0 206.0 C280.0 204.0 275.7 201.0 271.0 201.0 C266.3 201.0 261.3 203.8 257.0 206.0 C252.7 208.2 247.7 210.7 245.0 214.0 C242.3 217.3 243.0 221.7 241.0 226.0 C239.0 230.3 235.3 237.0 233.0 240.0 C230.7 243.0 229.0 244.2 227.0 244.0 C225.0 243.8 223.7 238.3 221.0 239.0 C218.3 239.7 212.7 246.5 211.0 248.0" fill="none" stroke="#dba6de" stroke-width="1.8" stroke-dasharray="5 2 1.5 2"/>
<path d="M919 686 L945 655 L975 625 L1000 600" fill="none" stroke="#dba6de" stroke-width="1.8" stroke-dasharray="5 2 1.5 2"/>
<path d="M559.0 133.0 C559.8 134.2 562.3 137.5 564.0 140.0 C565.7 142.5 569.2 145.3 569.0 148.0 C568.8 150.7 564.3 153.3 563.0 156.0 C561.7 158.7 559.3 162.3 561.0 164.0 C562.7 165.7 569.0 163.0 573.0 166.0 C577.0 169.0 580.5 178.0 585.0 182.0 C589.5 186.0 592.8 187.3 600.0 190.0 C607.2 192.7 620.0 197.7 628.0 198.0 C636.0 198.3 639.3 193.7 648.0 192.0 C656.7 190.3 672.0 190.3 680.0 188.0 C688.0 185.7 689.3 181.8 696.0 178.0 C702.7 174.2 712.7 168.4 720.0 165.0 C727.3 161.6 734.0 157.9 740.0 157.3 C746.0 156.7 752.3 159.2 756.0 161.2 C759.7 163.1 761.7 165.9 762.0 169.0 C762.3 172.1 757.3 177.6 758.0 180.0 C758.7 182.4 760.8 186.2 766.0 183.3 C771.2 180.4 784.4 165.3 789.4 162.5 C794.4 159.7 794.3 164.2 796.0 166.4 C797.7 168.6 796.1 173.6 799.8 175.5 C803.5 177.4 813.5 176.2 818.0 178.0 C822.5 179.8 822.7 189.2 827.0 186.0 C831.3 182.8 840.3 166.4 844.0 158.6 C847.7 150.8 844.9 143.1 849.2 139.0 C853.5 134.9 864.9 135.0 870.0 134.0 C875.1 133.0 878.3 133.2 880.0 133.0" fill="none" stroke="#e2e27a" stroke-width="4.2" stroke-linejoin="round"/>
<path d="M559.0 133.0 C559.8 134.2 562.3 137.5 564.0 140.0 C565.7 142.5 569.2 145.3 569.0 148.0 C568.8 150.7 564.3 153.3 563.0 156.0 C561.7 158.7 559.3 162.3 561.0 164.0 C562.7 165.7 569.0 163.0 573.0 166.0 C577.0 169.0 580.5 178.0 585.0 182.0 C589.5 186.0 592.8 187.3 600.0 190.0 C607.2 192.7 620.0 197.7 628.0 198.0 C636.0 198.3 639.3 193.7 648.0 192.0 C656.7 190.3 672.0 190.3 680.0 188.0 C688.0 185.7 689.3 181.8 696.0 178.0 C702.7 174.2 712.7 168.4 720.0 165.0 C727.3 161.6 734.0 157.9 740.0 157.3 C746.0 156.7 752.3 159.2 756.0 161.2 C759.7 163.1 761.7 165.9 762.0 169.0 C762.3 172.1 757.3 177.6 758.0 180.0 C758.7 182.4 760.8 186.2 766.0 183.3 C771.2 180.4 784.4 165.3 789.4 162.5 C794.4 159.7 794.3 164.2 796.0 166.4 C797.7 168.6 796.1 173.6 799.8 175.5 C803.5 177.4 813.5 176.2 818.0 178.0 C822.5 179.8 822.7 189.2 827.0 186.0 C831.3 182.8 840.3 166.4 844.0 158.6 C847.7 150.8 844.9 143.1 849.2 139.0 C853.5 134.9 864.9 135.0 870.0 134.0 C875.1 133.0 878.3 133.2 880.0 133.0" fill="none" stroke="#f6f6a6" stroke-width="2.2" stroke-linejoin="round"/>
<path d="M786 134 L760 158" stroke="#c8c4bf" stroke-width="1"/>
<path d="M875.2 133.0 C873.2 136.4 865.0 147.8 863.5 153.4 C862.0 159.0 865.5 161.6 866.1 166.4 C866.8 171.2 867.4 178.1 867.4 182.0 C867.4 185.9 865.7 186.8 866.1 189.8 C866.5 192.8 869.8 196.3 870.0 200.2 C870.2 204.1 869.1 209.7 867.4 213.2 C865.7 216.7 861.3 217.5 859.6 221.0 C857.9 224.5 858.7 231.0 857.0 234.0 C855.3 237.0 852.2 236.2 849.2 239.2 C846.2 242.2 841.8 248.7 838.8 252.2 C835.8 255.7 834.5 257.4 831.0 260.0 C827.5 262.6 822.3 266.9 818.0 267.8 C813.7 268.7 810.2 264.1 805.0 265.2 C799.8 266.3 791.1 270.5 786.8 274.3 C782.5 278.1 780.3 285.7 779.0 288.0" fill="none" stroke="#9ecae0" stroke-width="2"/>
<path d="M623.0 593.0 C625.2 596.2 633.0 608.4 636.0 612.0 C639.0 615.6 637.1 612.9 641.0 614.6 C644.9 616.3 655.0 618.9 659.4 622.4 C663.8 625.9 662.4 633.7 667.2 635.4 C672.0 637.1 682.8 633.2 688.0 632.8 C693.2 632.4 694.9 631.1 698.4 632.8 C701.9 634.5 705.3 641.0 708.8 643.2 C712.3 645.4 714.9 643.6 719.2 645.8 C723.5 648.0 730.5 654.5 734.8 656.2 C739.1 657.9 742.2 654.0 745.2 656.2 C748.2 658.4 750.8 664.2 753.0 669.2 C755.2 674.2 757.3 683.2 758.2 686.0" fill="none" stroke="#9ecae0" stroke-width="2"/>
<path d="M952 431 L958 430 L966 428 L970 432 L975 437 L985 441 L1000 446" fill="none" stroke="#9ecae0" stroke-width="2"/>
<g fill="#a8d0e6">
<ellipse cx="947" cy="154" rx="5" ry="3" transform="rotate(-30 947 154)"/>
<ellipse cx="943" cy="205" rx="4.5" ry="3"/>
<ellipse cx="925" cy="195" rx="3" ry="3"/>
<ellipse cx="917" cy="212" rx="3" ry="3"/>
<ellipse cx="889" cy="261" rx="2" ry="2"/>
<ellipse cx="795" cy="204" rx="1.5" ry="2.5"/>
<ellipse cx="847" cy="172" rx="1.5" ry="2"/>
<ellipse cx="760" cy="168" rx="2" ry="2.5"/>
</g>
<g fill="#d28d4c">
<path d="M635 285 L639 278 L643 285Z"/><path d="M729 287 L733 280 L737 287Z"/><path d="M917 253 L921 246 L925 253Z"/><path d="M995 164 L999 157 L1003 164Z"/>
<path d="M968 597 L972 590 L976 597Z"/><path d="M979 528 L983 521 L987 528Z"/><path d="M991 675 L995 668 L999 675Z"/><path d="M508 608 L512 601 L516 608Z"/>
</g>
<path d="M231.5 593 V287.5 H952.5 V593" fill="none" stroke="#fff" stroke-width="1"/>
<rect x="232" y="288" width="720" height="305" fill="#000"/>
<path d="M785.8 379.5 L806.6 379.5 L808 401.6 L835 401.6 L900 405.5 L951 406.3 L951 438 L905.4 436.7 L900 453.6 L840.4 455 L839 466.6 L804 470.5 L739 469 L720.8 458.8 L765 432.8 L770 404 L785.8 399 Z" fill="#111111" filter="url(#nz2)"/>
<g clip-path="url(#blobclip)">
 <rect x="400" y="285" width="380" height="290" fill="url(#bg1)" filter="url(#nz)"/>
 <g filter="url(#blr)">
  <ellipse cx="440" cy="440" rx="40" ry="35" fill="#000" opacity="0.35"/>
  <ellipse cx="500" cy="430" rx="35" ry="25" fill="#000" opacity="0.25"/>
  <ellipse cx="690" cy="330" rx="60" ry="35" fill="#fff" opacity="0.15"/><ellipse cx="560" cy="400" rx="90" ry="20" fill="#000" opacity="0.2" transform="rotate(-15 560 400)"/>
  <ellipse cx="540" cy="520" rx="50" ry="30" fill="#fff" opacity="0.15"/><ellipse cx="535" cy="560" rx="28" ry="10" fill="#fff" opacity="0.45"/><ellipse cx="430" cy="470" rx="30" ry="14" fill="#000" opacity="0.3"/>
 </g>
 <g fill="none" stroke="#000" stroke-linecap="round">
  <path d="M408 462 L430 455 L456 444 L480 433 L499 427 L518 415 L547 418 L575 412 L600 398" stroke-width="2" opacity="0.35"/>
  <path d="M470 440 L500 455 L530 450 L560 460 L590 450" stroke-width="1.5" opacity="0.3"/>
  <path d="M640 420 L665 440 L700 452" stroke-width="1.5" opacity="0.3"/>
  <path d="M520 352 L560 375 L600 380" stroke-width="1.5" opacity="0.25"/>
 </g>
 <g fill="#fff" opacity="0.6"><ellipse cx="688" cy="412" rx="9" ry="3" transform="rotate(-30 688 412)"/><ellipse cx="683" cy="420" rx="7" ry="2" transform="rotate(-30 683 420)"/></g>
 <g stroke="#000" stroke-opacity="0.25" stroke-width="3.5">
  <path d="M482 285 V575 M546 285 V575 M609 285 V575 M675 285 V575 M400 341 H780 M400 405 H780 M400 469 H780 M400 532 H780"/>
 </g>
 <path d="M733 300 L747 305 L748 322 L735 322 Z" fill="#000" opacity="0.6"/>
</g>
</svg>
<div class="a" style="left:211px;top:133px;width:789px;height:1px;background:#b9b5ae"></div><div class="a" style="left:211px;top:133px;width:1px;height:553px;background:#b9b5ae"></div><div class="a" style="left:0;top:686px;width:1000px;height:23px;background:#efedea"></div><div class="a" style="left:2px;top:688px;width:217px;height:20px;background:#fff;border:1px solid #b7b3ac;border-radius:2px;"></div><svg style="position:absolute;left:9px;top:693px" width="12" height="12" viewBox="0 0 12 12" ><circle cx="4.5" cy="4.5" r="3.3" fill="none" stroke="#7a7a7a" stroke-width="1"/><path d="M7 7 L10 10" stroke="#7a7a7a" stroke-width="1.3"/></svg><div class="t" style="left:25px;top:693px;font-size:12px;color:#8a8a8a;font-weight:normal;font-style:normal;">Type to locate (Ctrl+K)</div><div class="t" style="left:273px;top:693.5px;font-size:10px;color:#2a2a2a;font-weight:normal;font-style:normal;">Coordinate</div><div class="a" style="left:324px;top:689px;width:85px;height:19px;background:#fff;border:1px solid #b7b3ac;border-radius:2px;"></div><div class="t" style="left:329.5px;top:693.5px;font-size:10px;color:#2a2a2a;font-weight:normal;font-style:normal;letter-spacing:-0.2px">277280,4188806</div><svg style="position:absolute;left:412px;top:690px" width="15" height="16" viewBox="0 0 15 16" ><g transform="rotate(-35 6.5 9.5)"><rect x="2.5" y="3.5" width="8" height="12" rx="4" fill="#fff" stroke="#2e2e2e" stroke-width="1.2"/><path d="M2.8 8.5 H10.2 M6.5 3.5 V8.5" stroke="#2e2e2e" stroke-width="1"/></g><path d="M9.5 2.8 Q11.5 0.8 14 1.5" stroke="#2e2e2e" stroke-width="1" fill="none"/></svg><div class="t" style="left:435px;top:693.5px;font-size:10px;color:#2a2a2a;font-weight:normal;font-style:normal;">Scale</div><div class="a" style="left:462px;top:689px;width:77px;height:19px;background:#fff;border:1px solid #b7b3ac;border-radius:2px;"></div><div class="a" style="left:523px;top:690px;width:1px;height:17px;background:#cfccc6"></div><svg style="position:absolute;left:526px;top:696px" width="9" height="5" viewBox="0 0 9 5" ><path d="M0.5 0.5 H8.5 L4.5 4.5Z" fill="#555"/></svg><div class="t" style="left:464px;top:693.5px;font-size:10px;color:#2a2a2a;font-weight:normal;font-style:normal;">1:95494</div><svg style="position:absolute;left:546px;top:690px" width="11" height="15" viewBox="0 0 11 15" ><path d="M2.5 7 V4.5 C2.5 1 8.5 1 8.5 4.5 V7" fill="none" stroke="#6a6a6a" stroke-width="1.8"/><rect x="1" y="7" width="9" height="7" rx="1" fill="#6a6a6a"/></svg><div class="t" style="left:565px;top:693.5px;font-size:10px;color:#2a2a2a;font-weight:normal;font-style:normal;">Magnifier</div><div class="a" style="left:610px;top:689px;width:77px;height:19px;background:#fff;border:1px solid #b7b3ac;border-radius:2px;"></div><div class="t" style="left:613.5px;top:693.5px;font-size:10px;color:#2a2a2a;font-weight:normal;font-style:normal;">100%</div><div class="a" style="left:675px;top:690px;width:1px;height:17px;background:#e0ddd8"></div><svg style="position:absolute;left:677px;top:691px" width="9" height="15" viewBox="0 0 9 15" ><path d="M1 5 L4.5 1 L8 5Z M1 10 L4.5 14 L8 10Z" fill="#555"/></svg><div class="t" style="left:695px;top:693.5px;font-size:10px;color:#2a2a2a;font-weight:normal;font-style:normal;">Rotation</div><div class="a" style="left:741px;top:689px;width:75px;height:19px;background:#fff;border:1px solid #b7b3ac;border-radius:2px;"></div><div class="t" style="left:745px;top:693.5px;font-size:10px;color:#2a2a2a;font-weight:normal;font-style:normal;">0,0 °</div><div class="a" style="left:804px;top:690px;width:1px;height:17px;background:#e0ddd8"></div><svg style="position:absolute;left:806px;top:691px" width="9" height="15" viewBox="0 0 9 15" ><path d="M1 5 L4.5 1 L8 5Z M1 10 L4.5 14 L8 10Z" fill="#555"/></svg><svg style="position:absolute;left:820px;top:692px" width="12" height="12" viewBox="0 0 12 12" ><rect x="0.5" y="0.5" width="11" height="11" rx="1" fill="#fff" stroke="#6f6c66"/><path d="M2.5 6 L5 9 L9.5 2" stroke="#111" stroke-width="1.5" fill="none"/></svg><div class="t" style="left:835.5px;top:693px;font-size:10px;color:#2a2a2a;font-weight:normal;font-style:normal;">Render</div><svg style="position:absolute;left:882px;top:692px" width="13" height="13" viewBox="0 0 13 13" ><circle cx="6.5" cy="6.5" r="5.8" fill="#f5f5f5" stroke="#777"/><path d="M0.7 6.5 H12.3 M6.5 0.7 V12.3 M2 3.5 H11 M2 9.5 H11" stroke="#777" stroke-width="0.8"/><ellipse cx="6.5" cy="6.5" rx="2.8" ry="5.8" fill="none" stroke="#777" stroke-width="0.8"/></svg><div class="t" style="left:897px;top:693.5px;font-size:10px;color:#2a2a2a;font-weight:normal;font-style:normal;letter-spacing:-0.55px">EPSG:26911</div><svg style="position:absolute;left:964px;top:691px" width="14" height="14" viewBox="0 0 14 14" ><path d="M7 1 C11 1 13 3.5 13 6 C13 9 10 11 7 11 C6 11 5 11 4 10.5 L1 13 L2 9.5 C1.3 8.5 1 7.3 1 6 C1 3.5 3 1 7 1Z" fill="#555"/><circle cx="4.5" cy="6" r="1" fill="#fff"/><circle cx="7" cy="6" r="1" fill="#fff"/><circle cx="9.5" cy="6" r="1" fill="#fff"/></svg><div class="a" style="left:996px;top:700px;width:1px;height:1px;background:#b9b5ae"></div><div class="a" style="left:996px;top:703px;width:1px;height:1px;background:#b9b5ae"></div><div class="a" style="left:993px;top:703px;width:1px;height:1px;background:#b9b5ae"></div><div class="a" style="left:996px;top:706px;width:1px;height:1px;background:#b9b5ae"></div><div class="a" style="left:993px;top:706px;width:1px;height:1px;background:#b9b5ae"></div><div class="a" style="left:990px;top:706px;width:1px;height:1px;background:#b9b5ae"></div></body></html>
